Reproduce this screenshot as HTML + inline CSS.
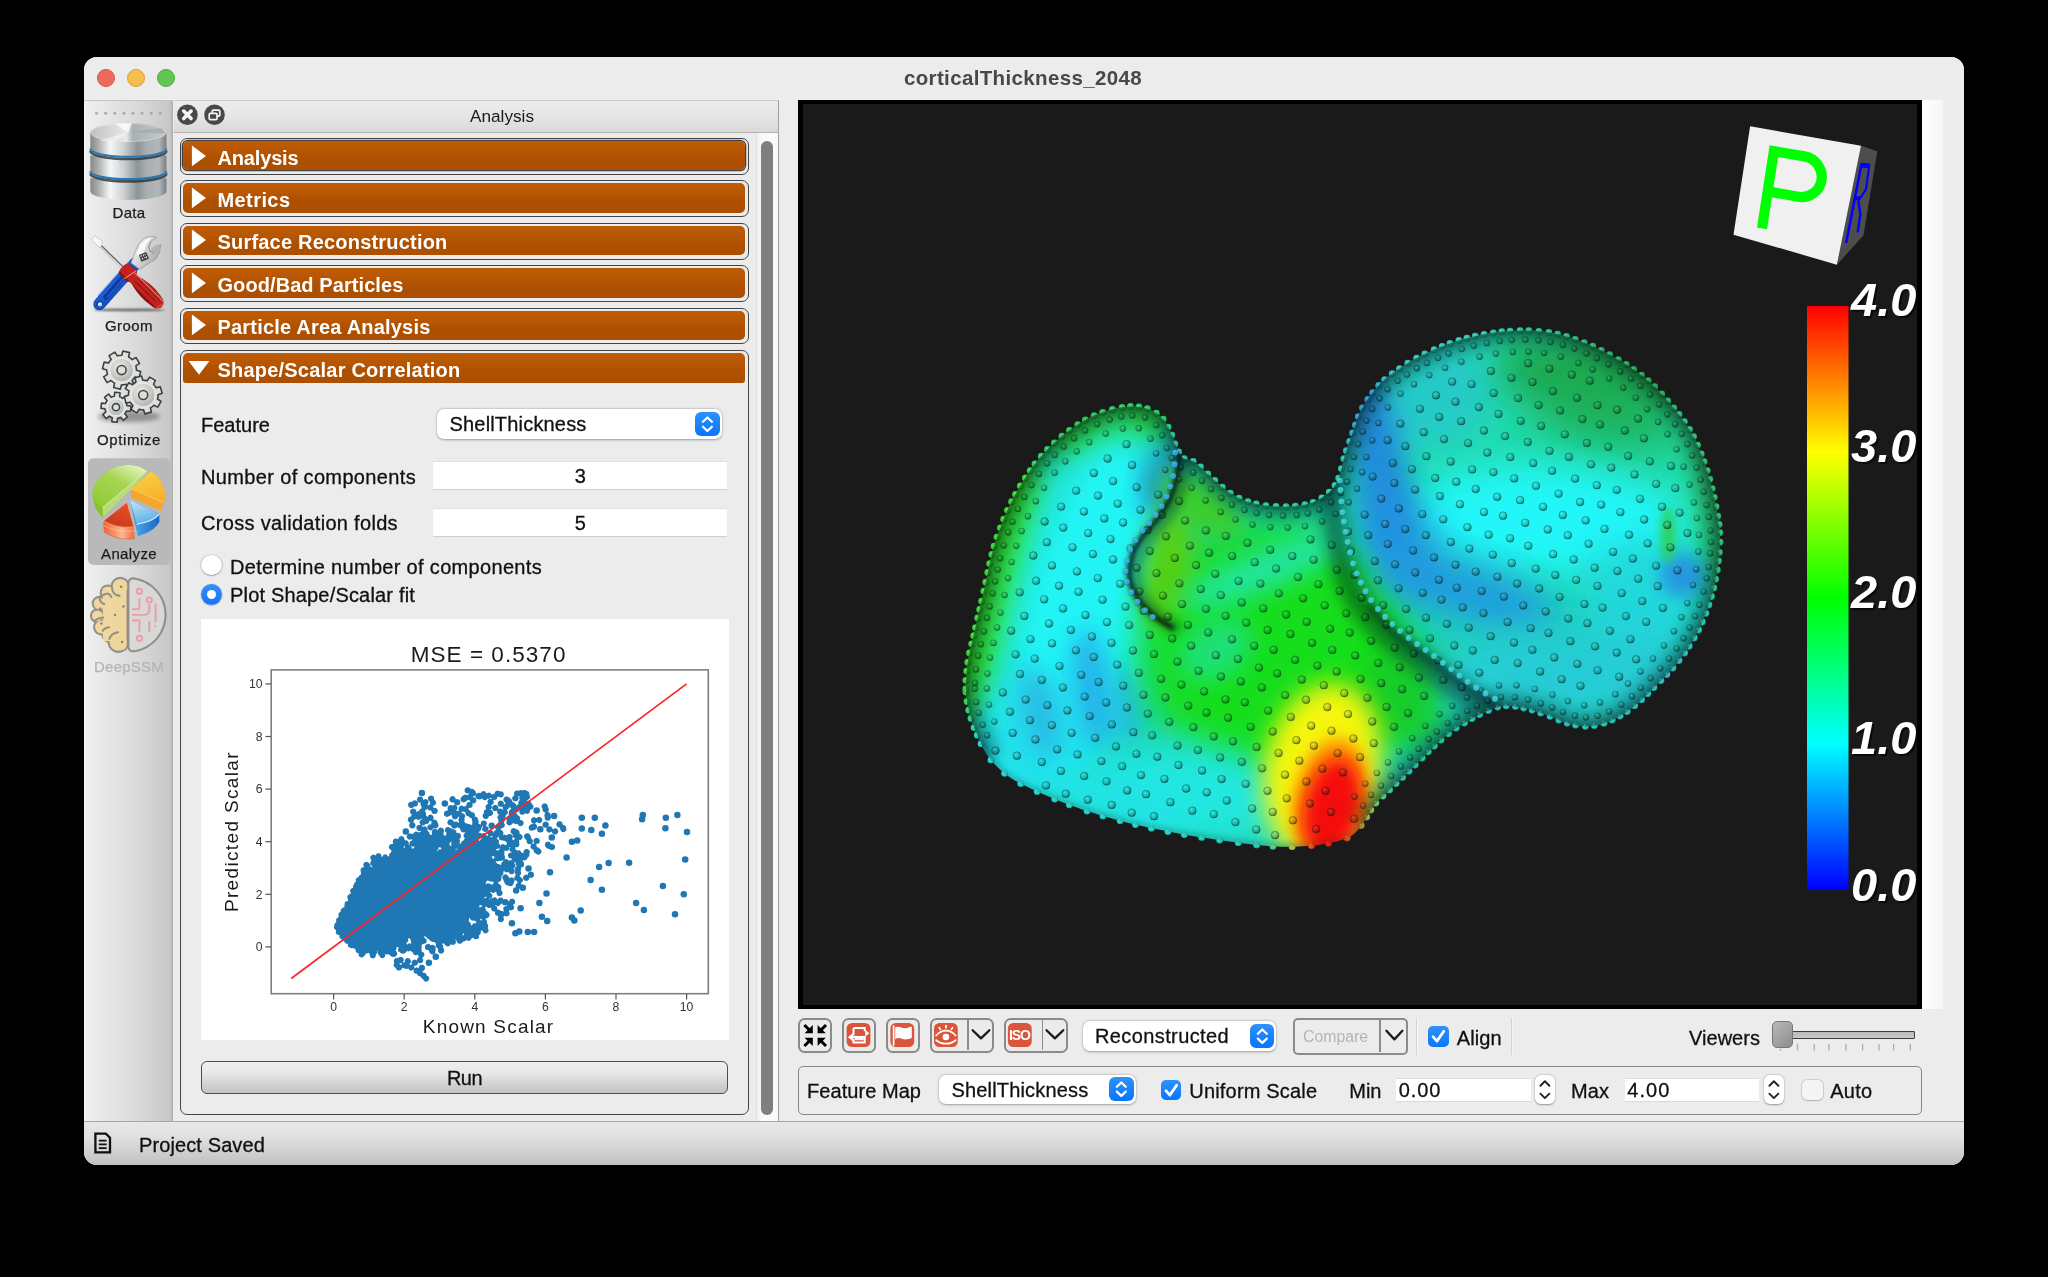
<!DOCTYPE html>
<html>
<head>
<meta charset="utf-8">
<title>corticalThickness_2048</title>
<style>
html,body{margin:0;padding:0;background:#000;}
body{will-change:transform;width:2048px;height:1277px;position:relative;overflow:hidden;font-family:"Liberation Sans",sans-serif;color:#111;}
.abs{position:absolute;}
#win{position:absolute;left:84px;top:57px;width:1880px;height:1108px;background:#ececec;border-radius:13px;overflow:hidden;}
#titlebar{position:absolute;left:0;top:0;width:1880px;height:43px;background:#ececec;border-bottom:1px solid #f0f0f0;box-sizing:border-box;}
.tl{position:absolute;top:12px;width:18px;height:18px;border-radius:50%;box-sizing:border-box;}
#title{position:absolute;left:0;top:0;width:1878px;height:43px;line-height:41px;text-align:center;font-weight:bold;font-size:20.5px;letter-spacing:0.36px;color:#484848;}
#ltool{position:absolute;left:0;top:43px;width:89px;height:1022px;border-top:1px solid #c2c2c2;box-sizing:border-box;background:linear-gradient(90deg,#f7f7f7 0px,#f3f3f3 1.6px,#eeeeee 3.5px,#e7e7e7 22px,#d5d5d5 62px,#c7c7c7 86px,#b0b0b0 88.5px,#dcdcdc 89px);}
.tlabel{position:absolute;left:0;width:89px;text-align:center;font-size:15.5px;color:#1c1c1c;letter-spacing:0.4px;}
#status{position:absolute;left:0;top:1064px;width:1880px;height:44px;background:linear-gradient(180deg,#e8e8e8 0%,#e0e0e0 35%,#cdcdcd 75%,#c0c0c0 100%);border-top:1.4px solid #a6a6a6;box-sizing:border-box;}
#dockhead{position:absolute;left:90px;top:43px;width:604px;height:33px;background:linear-gradient(180deg,#ebebeb,#dedede);border-bottom:1px solid #c4c4c4;box-sizing:border-box;}
.gb{position:absolute;left:96px;width:570px;height:37px;border:1.5px solid #3a3a3a;border-radius:7px;box-sizing:border-box;background:#ececec;}
.gbh{position:absolute;left:2.5px;top:2.5px;right:2.5px;height:29px;border-radius:5px;background:linear-gradient(180deg,#c05c06 0%,#b65503 45%,#ab4f00 100%);box-shadow:0 0 0 1px #7d3a00 inset;}
.gbt{position:absolute;left:34px;top:0;height:29px;line-height:30px;color:#fff;font-weight:bold;font-size:20px;white-space:nowrap;}
.lbl{position:absolute;font-size:20px;-webkit-text-stroke:0.3px #111;color:#111;white-space:nowrap;line-height:24px;}
.ledit{position:absolute;background:#fff;border-top:1px solid #e2e2e2;border-bottom:1px solid #cfcfcf;box-sizing:border-box;text-align:center;font-size:20px;-webkit-text-stroke:0.3px #111;}
.combo{position:absolute;background:#fff;border-radius:7px;box-shadow:0 0.5px 2.5px rgba(0,0,0,0.32),0 0 0 0.5px rgba(0,0,0,0.06);font-size:20px;-webkit-text-stroke:0.3px #111;}
.combo .ct{position:absolute;left:13px;top:0;white-space:nowrap;}
.cbtn{position:absolute;width:24px;height:25px;border-radius:6px;background:linear-gradient(180deg,#2e92fd,#0775fb);}
.chk{position:absolute;width:20px;height:20px;border-radius:5px;background:linear-gradient(180deg,#2e92fd,#0a76fb);}
.tbtn{position:absolute;height:40px;border:3px solid #8e8e8e;border-radius:8px;box-sizing:border-box;background:#e6e6e6;}

.gb2{position:absolute;left:180.3px;width:568.7px;height:36.8px;border:1.7px solid #444;border-radius:7px;box-sizing:border-box;background:#ececec;}
.gbh2{position:absolute;left:1.7px;top:2px;width:562.2px;height:29.6px;border-radius:5px;background:linear-gradient(180deg,#bf5c05 0%,#b75603 35%,#ad5000 60%,#ac4f00 100%);}
.gbh2.first{box-shadow:0 0 0 1.3px #444;left:2.2px;width:561.2px;top:2.4px;height:28.8px;}
.tri{position:absolute;left:5.4px;top:4.6px;width:24px;height:24px;}
.gbt2{position:absolute;left:36.2px;top:3.5px;height:29.6px;line-height:30.6px;color:#fff;font-weight:bold;font-size:20px;white-space:nowrap;}

.tb2{position:absolute;top:1018.3px;height:34.9px;border:2.7px solid #8b8b8b;border-radius:6.5px;box-sizing:border-box;background:#ebebeb;}
.tbdiv{position:absolute;top:0;width:1.6px;height:29.5px;background:#8b8b8b;}
.spin{position:absolute;top:1077.6px;height:24.6px;background:#fff;border-top:1px solid #dcdcdc;border-bottom:1px solid #d8d8d8;box-sizing:border-box;font-size:20px;line-height:23px;padding-left:2.6px;-webkit-text-stroke:0.3px #111;}
.stp{position:absolute;top:1074.7px;width:19.8px;height:29.4px;border-radius:6px;background:#fff;box-shadow:0 0.5px 2px rgba(0,0,0,0.35),0 0 0 0.5px rgba(0,0,0,0.06);}
</style>
</head>
<body>
<div id="win">
  <div id="titlebar">
    <div class="tl" style="left:13px;background:#ed6a5e;border:1px solid #d5554a;"></div>
    <div class="tl" style="left:43px;background:#f5bf4f;border:1px solid #d9a23b;"></div>
    <div class="tl" style="left:73px;background:#62c554;border:1px solid #4fa840;"></div>
    <div id="title">corticalThickness_2048</div>
  </div>
  <div id="ltool"></div>
  <div id="dockhead"></div>
  <div id="status"></div>
</div>
<!-- page-coordinate layers -->
<div id="viewer" class="abs" style="left:798px;top:100px;width:1124px;height:908.8px;background:#1a1a1a;border:4px solid #000;border-left-width:5px;border-right-width:5px;box-sizing:border-box;"></div>
<div class="abs" style="left:1922px;top:100px;width:21px;height:908.8px;background:linear-gradient(90deg,#fff,#f6f6f6);"></div>
<svg class="abs" style="left:801px;top:103px" width="1118" height="902" viewBox="801 103 1118 902">
<defs>
<filter id="b2" x="-50%" y="-50%" width="200%" height="200%"><feGaussianBlur stdDeviation="2"/></filter>
<filter id="b3" x="-50%" y="-50%" width="200%" height="200%"><feGaussianBlur stdDeviation="3"/></filter>
<filter id="b5" x="-50%" y="-50%" width="200%" height="200%"><feGaussianBlur stdDeviation="5"/></filter>
<filter id="b8" x="-50%" y="-50%" width="200%" height="200%"><feGaussianBlur stdDeviation="8"/></filter>
<filter id="b12" x="-50%" y="-50%" width="200%" height="200%"><feGaussianBlur stdDeviation="12"/></filter>
<filter id="b18" x="-50%" y="-50%" width="200%" height="200%"><feGaussianBlur stdDeviation="18"/></filter>
<filter id="b26" x="-50%" y="-50%" width="200%" height="200%"><feGaussianBlur stdDeviation="26"/></filter>
<linearGradient id="cbar" x1="0" y1="0" x2="0" y2="1"><stop offset="0" stop-color="#ff0000"/><stop offset="0.25" stop-color="#ffff00"/><stop offset="0.5" stop-color="#00ff00"/><stop offset="0.75" stop-color="#00ffff"/><stop offset="1" stop-color="#0000ff"/></linearGradient>
<radialGradient id="dotg" cx="0.4" cy="0.35" r="0.7"><stop offset="0" stop-color="#fff" stop-opacity="0.3"/><stop offset="0.28" stop-color="#003020" stop-opacity="0.1"/><stop offset="0.65" stop-color="#002018" stop-opacity="0.3"/><stop offset="1" stop-color="#001008" stop-opacity="0.62"/></radialGradient>
<g id="dt"><circle r="3.9" fill="url(#dotg)" stroke="#001a10" stroke-opacity="0.3" stroke-width="0.9"/></g>
<radialGradient id="dotg2" cx="0.4" cy="0.35" r="0.75"><stop offset="0" stop-color="#fff" stop-opacity="0.3"/><stop offset="0.6" stop-color="#000" stop-opacity="0.0"/><stop offset="1" stop-color="#000" stop-opacity="0.45"/></radialGradient>
<g id="de"><circle r="3.4" fill="url(#dotg2)"/></g>
<g id="ds"><circle r="3.1" fill="url(#dotg)" stroke="#001a10" stroke-opacity="0.26" stroke-width="0.8"/></g>
<clipPath id="sc"><path d="M965.8,689.0C965.6,680.4 966.5,670.8 968.0,661.0C969.5,651.2 972.2,642.5 975.0,630.0C977.8,617.5 982.0,599.3 985.0,586.0C988.0,572.7 989.7,561.5 993.0,550.0C996.3,538.5 1000.4,527.0 1004.6,517.0C1008.8,507.0 1012.4,499.5 1018.0,490.0C1023.6,480.5 1030.8,468.8 1038.0,460.0C1045.2,451.2 1052.8,443.8 1061.0,437.0C1069.2,430.2 1078.5,423.6 1087.0,419.0C1095.5,414.4 1104.5,411.6 1112.0,409.5C1119.5,407.4 1125.8,406.5 1132.0,406.5C1138.2,406.5 1144.3,407.4 1149.5,409.5C1154.7,411.6 1159.4,415.1 1163.0,419.0C1166.6,422.9 1168.8,428.4 1171.0,433.0C1173.2,437.6 1174.0,442.4 1176.0,446.6C1178.0,450.8 1179.9,455.4 1183.0,458.0C1186.1,460.6 1190.0,459.0 1194.5,462.0C1199.0,465.0 1204.4,471.1 1210.0,476.0C1215.6,480.9 1221.8,487.4 1228.0,491.6C1234.2,495.8 1239.5,498.9 1247.0,501.4C1254.5,503.8 1263.8,505.6 1273.0,506.3C1282.2,507.0 1293.9,506.7 1302.0,505.3C1310.1,503.9 1315.7,501.7 1321.5,498.0C1327.3,494.3 1332.7,490.2 1336.6,483.0C1340.5,475.8 1342.1,464.0 1345.0,455.0C1347.9,446.0 1351.1,436.9 1354.0,429.0C1356.9,421.1 1358.2,415.2 1362.5,407.7C1366.8,400.2 1373.9,390.4 1380.0,384.0C1386.1,377.6 1392.2,373.7 1399.0,369.0C1405.8,364.3 1411.9,360.3 1420.6,356.0C1429.3,351.7 1440.6,346.6 1451.0,343.0C1461.4,339.4 1472.3,336.5 1483.0,334.5C1493.7,332.5 1504.2,331.2 1515.0,330.8C1525.8,330.4 1537.2,330.6 1548.0,332.3C1558.8,334.0 1569.3,337.1 1580.0,341.0C1590.7,344.9 1601.2,349.9 1612.0,356.0C1622.8,362.1 1634.9,369.6 1644.6,377.5C1654.3,385.4 1662.1,394.1 1670.0,403.4C1677.9,412.7 1685.8,422.4 1692.0,433.5C1698.2,444.6 1703.0,458.1 1707.0,470.0C1711.0,481.9 1713.5,493.4 1715.7,504.6C1717.9,515.8 1719.8,525.8 1720.0,537.0C1720.2,548.2 1718.8,560.7 1717.0,572.0C1715.2,583.3 1712.5,594.1 1709.0,604.6C1705.5,615.1 1701.3,625.3 1696.0,635.0C1690.7,644.7 1683.8,654.4 1677.0,663.0C1670.2,671.6 1662.5,679.0 1655.0,686.5C1647.5,694.0 1639.5,702.2 1632.0,708.0C1624.5,713.8 1617.2,718.0 1610.0,721.0C1602.8,724.0 1595.8,726.0 1588.6,726.3C1581.4,726.6 1574.2,725.0 1567.0,723.0C1559.8,721.0 1552.7,717.0 1545.5,714.5C1538.3,712.0 1530.8,709.5 1524.0,708.0C1517.2,706.5 1510.8,705.3 1504.6,705.8C1498.4,706.3 1493.1,708.5 1487.0,711.0C1480.9,713.5 1474.0,717.5 1468.0,721.0C1462.0,724.5 1456.8,727.4 1451.0,731.7C1445.2,736.0 1438.9,741.8 1433.5,746.8C1428.1,751.8 1423.6,756.8 1418.5,761.8C1413.4,766.8 1408.0,772.1 1403.0,777.0C1398.0,781.9 1393.2,786.4 1388.5,791.0C1383.8,795.6 1379.0,799.1 1374.7,804.4C1370.5,809.7 1367.0,817.7 1363.0,823.0C1359.0,828.3 1356.5,832.7 1351.0,836.0C1345.5,839.3 1337.4,841.3 1330.0,843.0C1322.6,844.7 1314.7,845.4 1306.5,846.0C1298.3,846.6 1289.7,847.0 1280.7,846.7C1271.7,846.4 1263.1,845.6 1252.5,844.4C1241.9,843.2 1229.1,841.5 1217.0,839.7C1204.9,837.9 1192.6,836.1 1179.7,833.8C1166.8,831.4 1153.0,828.7 1139.7,825.6C1126.4,822.5 1112.3,818.8 1099.8,815.0C1087.3,811.2 1075.5,807.2 1064.5,803.0C1053.5,798.8 1043.4,794.5 1034.0,790.0C1024.6,785.5 1015.5,781.4 1008.0,776.0C1000.5,770.6 994.1,764.1 989.0,757.4C983.9,750.7 980.9,743.4 977.6,736.0C974.3,728.6 971.4,720.6 969.4,712.8C967.4,705.0 966.0,697.6 965.8,689.0Z"/></clipPath>
<mask id="sm" maskUnits="userSpaceOnUse" x="801" y="103" width="1118" height="902"><path d="M965.8,689.0C965.6,680.4 966.5,670.8 968.0,661.0C969.5,651.2 972.2,642.5 975.0,630.0C977.8,617.5 982.0,599.3 985.0,586.0C988.0,572.7 989.7,561.5 993.0,550.0C996.3,538.5 1000.4,527.0 1004.6,517.0C1008.8,507.0 1012.4,499.5 1018.0,490.0C1023.6,480.5 1030.8,468.8 1038.0,460.0C1045.2,451.2 1052.8,443.8 1061.0,437.0C1069.2,430.2 1078.5,423.6 1087.0,419.0C1095.5,414.4 1104.5,411.6 1112.0,409.5C1119.5,407.4 1125.8,406.5 1132.0,406.5C1138.2,406.5 1144.3,407.4 1149.5,409.5C1154.7,411.6 1159.4,415.1 1163.0,419.0C1166.6,422.9 1168.8,428.4 1171.0,433.0C1173.2,437.6 1174.0,442.4 1176.0,446.6C1178.0,450.8 1179.9,455.4 1183.0,458.0C1186.1,460.6 1190.0,459.0 1194.5,462.0C1199.0,465.0 1204.4,471.1 1210.0,476.0C1215.6,480.9 1221.8,487.4 1228.0,491.6C1234.2,495.8 1239.5,498.9 1247.0,501.4C1254.5,503.8 1263.8,505.6 1273.0,506.3C1282.2,507.0 1293.9,506.7 1302.0,505.3C1310.1,503.9 1315.7,501.7 1321.5,498.0C1327.3,494.3 1332.7,490.2 1336.6,483.0C1340.5,475.8 1342.1,464.0 1345.0,455.0C1347.9,446.0 1351.1,436.9 1354.0,429.0C1356.9,421.1 1358.2,415.2 1362.5,407.7C1366.8,400.2 1373.9,390.4 1380.0,384.0C1386.1,377.6 1392.2,373.7 1399.0,369.0C1405.8,364.3 1411.9,360.3 1420.6,356.0C1429.3,351.7 1440.6,346.6 1451.0,343.0C1461.4,339.4 1472.3,336.5 1483.0,334.5C1493.7,332.5 1504.2,331.2 1515.0,330.8C1525.8,330.4 1537.2,330.6 1548.0,332.3C1558.8,334.0 1569.3,337.1 1580.0,341.0C1590.7,344.9 1601.2,349.9 1612.0,356.0C1622.8,362.1 1634.9,369.6 1644.6,377.5C1654.3,385.4 1662.1,394.1 1670.0,403.4C1677.9,412.7 1685.8,422.4 1692.0,433.5C1698.2,444.6 1703.0,458.1 1707.0,470.0C1711.0,481.9 1713.5,493.4 1715.7,504.6C1717.9,515.8 1719.8,525.8 1720.0,537.0C1720.2,548.2 1718.8,560.7 1717.0,572.0C1715.2,583.3 1712.5,594.1 1709.0,604.6C1705.5,615.1 1701.3,625.3 1696.0,635.0C1690.7,644.7 1683.8,654.4 1677.0,663.0C1670.2,671.6 1662.5,679.0 1655.0,686.5C1647.5,694.0 1639.5,702.2 1632.0,708.0C1624.5,713.8 1617.2,718.0 1610.0,721.0C1602.8,724.0 1595.8,726.0 1588.6,726.3C1581.4,726.6 1574.2,725.0 1567.0,723.0C1559.8,721.0 1552.7,717.0 1545.5,714.5C1538.3,712.0 1530.8,709.5 1524.0,708.0C1517.2,706.5 1510.8,705.3 1504.6,705.8C1498.4,706.3 1493.1,708.5 1487.0,711.0C1480.9,713.5 1474.0,717.5 1468.0,721.0C1462.0,724.5 1456.8,727.4 1451.0,731.7C1445.2,736.0 1438.9,741.8 1433.5,746.8C1428.1,751.8 1423.6,756.8 1418.5,761.8C1413.4,766.8 1408.0,772.1 1403.0,777.0C1398.0,781.9 1393.2,786.4 1388.5,791.0C1383.8,795.6 1379.0,799.1 1374.7,804.4C1370.5,809.7 1367.0,817.7 1363.0,823.0C1359.0,828.3 1356.5,832.7 1351.0,836.0C1345.5,839.3 1337.4,841.3 1330.0,843.0C1322.6,844.7 1314.7,845.4 1306.5,846.0C1298.3,846.6 1289.7,847.0 1280.7,846.7C1271.7,846.4 1263.1,845.6 1252.5,844.4C1241.9,843.2 1229.1,841.5 1217.0,839.7C1204.9,837.9 1192.6,836.1 1179.7,833.8C1166.8,831.4 1153.0,828.7 1139.7,825.6C1126.4,822.5 1112.3,818.8 1099.8,815.0C1087.3,811.2 1075.5,807.2 1064.5,803.0C1053.5,798.8 1043.4,794.5 1034.0,790.0C1024.6,785.5 1015.5,781.4 1008.0,776.0C1000.5,770.6 994.1,764.1 989.0,757.4C983.9,750.7 980.9,743.4 977.6,736.0C974.3,728.6 971.4,720.6 969.4,712.8C967.4,705.0 966.0,697.6 965.8,689.0Z" fill="#fff"/>
<g fill="#fff"><circle cx="965.8" cy="689.0" r="3.4"/><circle cx="965.9" cy="680.3" r="3.4"/><circle cx="966.7" cy="671.1" r="3.4"/><circle cx="967.8" cy="662.2" r="3.4"/><circle cx="969.5" cy="653.0" r="3.4"/><circle cx="971.7" cy="643.8" r="3.4"/><circle cx="973.7" cy="635.7" r="3.4"/><circle cx="975.5" cy="627.6" r="3.4"/><circle cx="977.7" cy="618.0" r="3.4"/><circle cx="979.7" cy="609.5" r="3.4"/><circle cx="981.6" cy="601.1" r="3.4"/><circle cx="983.8" cy="591.1" r="3.4"/><circle cx="985.8" cy="582.2" r="3.4"/><circle cx="987.8" cy="572.5" r="3.4"/><circle cx="989.7" cy="563.6" r="3.4"/><circle cx="991.9" cy="554.4" r="3.4"/><circle cx="994.1" cy="546.2" r="3.4"/><circle cx="997.0" cy="537.1" r="3.4"/><circle cx="1000.4" cy="527.8" r="3.4"/><circle cx="1003.7" cy="519.2" r="3.4"/><circle cx="1007.5" cy="510.3" r="3.4"/><circle cx="1011.6" cy="501.7" r="3.4"/><circle cx="1015.5" cy="494.3" r="3.4"/><circle cx="1020.4" cy="485.9" r="3.4"/><circle cx="1025.4" cy="477.9" r="3.4"/><circle cx="1030.2" cy="470.6" r="3.4"/><circle cx="1035.0" cy="463.9" r="3.4"/><circle cx="1041.3" cy="456.2" r="3.4"/><circle cx="1047.5" cy="449.4" r="3.4"/><circle cx="1054.4" cy="442.8" r="3.4"/><circle cx="1061.9" cy="436.2" r="3.4"/><circle cx="1069.5" cy="430.3" r="3.4"/><circle cx="1077.8" cy="424.6" r="3.4"/><circle cx="1085.4" cy="419.9" r="3.4"/><circle cx="1094.2" cy="415.6" r="3.4"/><circle cx="1102.7" cy="412.3" r="3.4"/><circle cx="1112.4" cy="409.4" r="3.4"/><circle cx="1122.1" cy="407.3" r="3.4"/><circle cx="1130.4" cy="406.5" r="3.4"/><circle cx="1138.9" cy="406.9" r="3.4"/><circle cx="1147.3" cy="408.7" r="3.4"/><circle cx="1156.3" cy="413.2" r="3.4"/><circle cx="1163.2" cy="419.2" r="3.4"/><circle cx="1168.2" cy="427.1" r="3.4"/><circle cx="1171.9" cy="435.1" r="3.4"/><circle cx="1174.9" cy="443.9" r="3.4"/><circle cx="1178.6" cy="452.0" r="3.4"/><circle cx="1184.2" cy="458.7" r="3.4"/><circle cx="1193.2" cy="461.3" r="3.4"/><circle cx="1200.5" cy="467.0" r="3.4"/><circle cx="1207.8" cy="474.0" r="3.4"/><circle cx="1214.8" cy="480.4" r="3.4"/><circle cx="1222.3" cy="487.1" r="3.4"/><circle cx="1230.2" cy="493.1" r="3.4"/><circle cx="1239.0" cy="498.2" r="3.4"/><circle cx="1247.9" cy="501.7" r="3.4"/><circle cx="1256.2" cy="503.9" r="3.4"/><circle cx="1265.9" cy="505.6" r="3.4"/><circle cx="1276.0" cy="506.4" r="3.4"/><circle cx="1286.0" cy="506.6" r="3.4"/><circle cx="1295.3" cy="506.1" r="3.4"/><circle cx="1304.9" cy="504.7" r="3.4"/><circle cx="1313.1" cy="502.3" r="3.4"/><circle cx="1321.9" cy="497.8" r="3.4"/><circle cx="1329.3" cy="492.1" r="3.4"/><circle cx="1335.0" cy="485.5" r="3.4"/><circle cx="1338.7" cy="478.1" r="3.4"/><circle cx="1341.4" cy="468.6" r="3.4"/><circle cx="1343.9" cy="458.7" r="3.4"/><circle cx="1346.4" cy="450.7" r="3.4"/><circle cx="1349.6" cy="441.4" r="3.4"/><circle cx="1352.6" cy="432.9" r="3.4"/><circle cx="1355.4" cy="424.9" r="3.4"/><circle cx="1358.3" cy="416.6" r="3.4"/><circle cx="1362.4" cy="407.8" r="3.4"/><circle cx="1367.8" cy="399.4" r="3.4"/><circle cx="1372.7" cy="392.7" r="3.4"/><circle cx="1378.7" cy="385.5" r="3.4"/><circle cx="1384.6" cy="379.6" r="3.4"/><circle cx="1392.2" cy="373.7" r="3.4"/><circle cx="1399.5" cy="368.7" r="3.4"/><circle cx="1407.8" cy="363.2" r="3.4"/><circle cx="1416.6" cy="358.1" r="3.4"/><circle cx="1424.8" cy="354.0" r="3.4"/><circle cx="1434.1" cy="349.7" r="3.4"/><circle cx="1442.2" cy="346.3" r="3.4"/><circle cx="1450.0" cy="343.4" r="3.4"/><circle cx="1458.9" cy="340.4" r="3.4"/><circle cx="1466.9" cy="338.2" r="3.4"/><circle cx="1475.2" cy="336.1" r="3.4"/><circle cx="1484.1" cy="334.3" r="3.4"/><circle cx="1493.4" cy="332.8" r="3.4"/><circle cx="1501.8" cy="331.7" r="3.4"/><circle cx="1510.1" cy="331.1" r="3.4"/><circle cx="1520.0" cy="330.7" r="3.4"/><circle cx="1528.8" cy="330.7" r="3.4"/><circle cx="1538.9" cy="331.3" r="3.4"/><circle cx="1548.8" cy="332.5" r="3.4"/><circle cx="1557.6" cy="334.2" r="3.4"/><circle cx="1566.4" cy="336.5" r="3.4"/><circle cx="1575.2" cy="339.3" r="3.4"/><circle cx="1584.1" cy="342.6" r="3.4"/><circle cx="1592.8" cy="346.2" r="3.4"/><circle cx="1601.2" cy="350.3" r="3.4"/><circle cx="1609.6" cy="354.7" r="3.4"/><circle cx="1618.3" cy="359.7" r="3.4"/><circle cx="1626.2" cy="364.5" r="3.4"/><circle cx="1633.7" cy="369.5" r="3.4"/><circle cx="1641.5" cy="375.1" r="3.4"/><circle cx="1648.2" cy="380.6" r="3.4"/><circle cx="1654.7" cy="386.6" r="3.4"/><circle cx="1661.7" cy="393.9" r="3.4"/><circle cx="1667.8" cy="400.9" r="3.4"/><circle cx="1673.8" cy="408.0" r="3.4"/><circle cx="1679.0" cy="414.4" r="3.4"/><circle cx="1684.4" cy="421.6" r="3.4"/><circle cx="1689.5" cy="429.4" r="3.4"/><circle cx="1693.6" cy="436.6" r="3.4"/><circle cx="1697.6" cy="445.1" r="3.4"/><circle cx="1701.2" cy="453.9" r="3.4"/><circle cx="1704.1" cy="461.7" r="3.4"/><circle cx="1707.2" cy="470.6" r="3.4"/><circle cx="1709.8" cy="479.3" r="3.4"/><circle cx="1712.2" cy="488.6" r="3.4"/><circle cx="1714.2" cy="497.3" r="3.4"/><circle cx="1716.1" cy="506.7" r="3.4"/><circle cx="1717.8" cy="516.2" r="3.4"/><circle cx="1719.1" cy="524.4" r="3.4"/><circle cx="1719.8" cy="532.7" r="3.4"/><circle cx="1720.0" cy="542.2" r="3.4"/><circle cx="1719.4" cy="552.3" r="3.4"/><circle cx="1718.5" cy="561.0" r="3.4"/><circle cx="1717.3" cy="570.0" r="3.4"/><circle cx="1715.7" cy="579.2" r="3.4"/><circle cx="1713.8" cy="587.9" r="3.4"/><circle cx="1711.5" cy="596.5" r="3.4"/><circle cx="1708.9" cy="604.9" r="3.4"/><circle cx="1705.9" cy="613.3" r="3.4"/><circle cx="1702.3" cy="622.0" r="3.4"/><circle cx="1698.6" cy="630.0" r="3.4"/><circle cx="1694.3" cy="637.9" r="3.4"/><circle cx="1689.2" cy="646.2" r="3.4"/><circle cx="1684.6" cy="653.0" r="3.4"/><circle cx="1679.0" cy="660.5" r="3.4"/><circle cx="1672.9" cy="668.0" r="3.4"/><circle cx="1666.9" cy="674.5" r="3.4"/><circle cx="1660.9" cy="680.6" r="3.4"/><circle cx="1653.9" cy="687.6" r="3.4"/><circle cx="1647.8" cy="693.7" r="3.4"/><circle cx="1641.6" cy="699.7" r="3.4"/><circle cx="1634.8" cy="705.7" r="3.4"/><circle cx="1627.2" cy="711.5" r="3.4"/><circle cx="1620.1" cy="716.0" r="3.4"/><circle cx="1612.2" cy="720.0" r="3.4"/><circle cx="1604.0" cy="723.2" r="3.4"/><circle cx="1594.4" cy="725.6" r="3.4"/><circle cx="1585.4" cy="726.3" r="3.4"/><circle cx="1575.6" cy="725.1" r="3.4"/><circle cx="1567.3" cy="723.1" r="3.4"/><circle cx="1558.9" cy="720.1" r="3.4"/><circle cx="1550.2" cy="716.3" r="3.4"/><circle cx="1540.8" cy="712.9" r="3.4"/><circle cx="1532.2" cy="710.1" r="3.4"/><circle cx="1523.8" cy="708.0" r="3.4"/><circle cx="1515.5" cy="706.4" r="3.4"/><circle cx="1506.3" cy="705.8" r="3.4"/><circle cx="1497.8" cy="707.0" r="3.4"/><circle cx="1488.6" cy="710.4" r="3.4"/><circle cx="1479.6" cy="714.5" r="3.4"/><circle cx="1472.1" cy="718.6" r="3.4"/><circle cx="1464.5" cy="723.0" r="3.4"/><circle cx="1456.2" cy="728.1" r="3.4"/><circle cx="1448.5" cy="733.7" r="3.4"/><circle cx="1441.0" cy="740.0" r="3.4"/><circle cx="1434.4" cy="746.0" r="3.4"/><circle cx="1428.3" cy="751.8" r="3.4"/><circle cx="1422.2" cy="758.1" r="3.4"/><circle cx="1415.2" cy="765.0" r="3.4"/><circle cx="1409.0" cy="771.2" r="3.4"/><circle cx="1402.6" cy="777.4" r="3.4"/><circle cx="1396.1" cy="783.6" r="3.4"/><circle cx="1389.6" cy="789.9" r="3.4"/><circle cx="1383.0" cy="796.0" r="3.4"/><circle cx="1375.9" cy="803.1" r="3.4"/><circle cx="1370.9" cy="810.0" r="3.4"/><circle cx="1366.8" cy="817.1" r="3.4"/><circle cx="1361.2" cy="825.5" r="3.4"/><circle cx="1347.2" cy="837.9" r="3.4"/><circle cx="1328.5" cy="843.3" r="3.4"/><circle cx="1311.5" cy="845.6" r="3.4"/><circle cx="1292.2" cy="846.7" r="3.4"/><circle cx="1273.0" cy="846.3" r="3.4"/><circle cx="1256.7" cy="844.9" r="3.4"/><circle cx="1238.3" cy="842.7" r="3.4"/><circle cx="1219.7" cy="840.1" r="3.4"/><circle cx="1201.7" cy="837.4" r="3.4"/><circle cx="1184.4" cy="834.6" r="3.4"/><circle cx="1168.0" cy="831.6" r="3.4"/><circle cx="1151.5" cy="828.2" r="3.4"/><circle cx="1135.5" cy="824.6" r="3.4"/><circle cx="1120.2" cy="820.7" r="3.4"/><circle cx="1103.0" cy="815.9" r="3.4"/><circle cx="1087.1" cy="811.0" r="3.4"/><circle cx="1069.4" cy="804.8" r="3.4"/><circle cx="1054.8" cy="799.1" r="3.4"/><circle cx="1037.2" cy="791.5" r="3.4"/><circle cx="1020.8" cy="783.6" r="3.4"/><circle cx="1004.6" cy="773.3" r="3.4"/><circle cx="991.0" cy="759.9" r="3.4"/><circle cx="981.1" cy="743.7" r="3.4"/><circle cx="977.3" cy="735.2" r="3.4"/><circle cx="974.1" cy="727.6" r="3.4"/><circle cx="971.0" cy="718.4" r="3.4"/><circle cx="968.8" cy="710.2" r="3.4"/><circle cx="967.0" cy="701.5" r="3.4"/><circle cx="966.0" cy="692.1" r="3.4"/></g></mask>
</defs>
<g mask="url(#sm)">
<rect x="940" y="300" width="820" height="580" fill="#1fd4b4"/>
<ellipse cx="990" cy="585" rx="32" ry="165" transform="rotate(14 990 585)" fill="#2fe02f" opacity="1" filter="url(#b12)"/>
<ellipse cx="1105" cy="428" rx="70" ry="30" transform="rotate(-8 1105 428)" fill="#25cc38" opacity="1" filter="url(#b12)"/>
<ellipse cx="1085" cy="610" rx="70" ry="185" transform="rotate(14 1085 610)" fill="#20f4f6" opacity="1" filter="url(#b18)"/>
<ellipse cx="1030" cy="745" rx="60" ry="60" transform="rotate(0 1030 745)" fill="#22e2ee" opacity="0.9" filter="url(#b18)"/>
<ellipse cx="1160" cy="482" rx="18" ry="34" transform="rotate(10 1160 482)" fill="#1f8ed8" opacity="0.95" filter="url(#b12)"/>
<ellipse cx="1093" cy="690" rx="20" ry="62" transform="rotate(-8 1093 690)" fill="#28a8e6" opacity="0.85" filter="url(#b12)"/>
<ellipse cx="1040" cy="712" rx="18" ry="48" transform="rotate(-12 1040 712)" fill="#2ab0e2" opacity="0.8" filter="url(#b12)"/>
<ellipse cx="1128" cy="705" rx="14" ry="40" transform="rotate(-5 1128 705)" fill="#28b0e6" opacity="0.6" filter="url(#b8)"/>
<ellipse cx="1275" cy="650" rx="135" ry="125" transform="rotate(0 1275 650)" fill="#14de1e" opacity="1" filter="url(#b18)"/>
<ellipse cx="1168" cy="565" rx="26" ry="62" transform="rotate(10 1168 565)" fill="#58cf0c" opacity="0.95" filter="url(#b12)"/>
<ellipse cx="1200" cy="505" rx="50" ry="22" transform="rotate(35 1200 505)" fill="#40cc18" opacity="0.9" filter="url(#b12)"/>
<ellipse cx="1265" cy="570" rx="92" ry="20" transform="rotate(-22 1265 570)" fill="#25e6b6" opacity="0.85" filter="url(#b12)"/>
<ellipse cx="1215" cy="650" rx="40" ry="28" transform="rotate(-30 1215 650)" fill="#22e0a0" opacity="0.7" filter="url(#b12)"/>
<ellipse cx="1195" cy="792" rx="95" ry="45" transform="rotate(10 1195 792)" fill="#20e8e0" opacity="1" filter="url(#b18)"/>
<ellipse cx="1120" cy="800" rx="70" ry="30" transform="rotate(15 1120 800)" fill="#22e4e6" opacity="0.9" filter="url(#b12)"/>
<ellipse cx="1400" cy="700" rx="45" ry="50" transform="rotate(0 1400 700)" fill="#14cc20" opacity="0.9" filter="url(#b12)"/>
<ellipse cx="1322" cy="770" rx="58" ry="88" transform="rotate(12 1322 770)" fill="#f6f60c" opacity="1" filter="url(#b12)"/>
<ellipse cx="1330" cy="800" rx="36" ry="62" transform="rotate(12 1330 800)" fill="#ff8a00" opacity="1" filter="url(#b8)"/>
<ellipse cx="1332" cy="808" rx="28" ry="50" transform="rotate(12 1332 808)" fill="#f50a0a" opacity="1" filter="url(#b8)"/>
<ellipse cx="1550" cy="460" rx="200" ry="150" transform="rotate(0 1550 460)" fill="#20dcae" opacity="1" filter="url(#b26)"/>
<ellipse cx="1430" cy="395" rx="70" ry="55" transform="rotate(-20 1430 395)" fill="#28c8cc" opacity="0.85" filter="url(#b18)"/>
<ellipse cx="1590" cy="376" rx="95" ry="38" transform="rotate(8 1590 376)" fill="#1fa650" opacity="1" filter="url(#b18)"/>
<ellipse cx="1610" cy="410" rx="80" ry="42" transform="rotate(10 1610 410)" fill="#1fae52" opacity="0.85" filter="url(#b26)"/>
<ellipse cx="1712" cy="480" rx="20" ry="130" transform="rotate(-5 1712 480)" fill="#2ac268" opacity="0.9" filter="url(#b12)"/>
<ellipse cx="1545" cy="520" rx="140" ry="55" transform="rotate(2 1545 520)" fill="#24f6f8" opacity="1" filter="url(#b18)"/>
<ellipse cx="1640" cy="600" rx="60" ry="60" transform="rotate(0 1640 600)" fill="#22d8e0" opacity="0.9" filter="url(#b18)"/>
<ellipse cx="1380" cy="465" rx="26" ry="95" transform="rotate(-10 1380 465)" fill="#2388dc" opacity="0.95" filter="url(#b12)"/>
<ellipse cx="1400" cy="540" rx="34" ry="60" transform="rotate(-25 1400 540)" fill="#2492e2" opacity="0.9" filter="url(#b18)"/>
<ellipse cx="1470" cy="592" rx="95" ry="28" transform="rotate(18 1470 592)" fill="#2496e4" opacity="0.95" filter="url(#b18)"/>
<ellipse cx="1570" cy="675" rx="130" ry="45" transform="rotate(0 1570 675)" fill="#26ccd8" opacity="0.95" filter="url(#b18)"/>
<ellipse cx="1682" cy="575" rx="22" ry="22" transform="rotate(0 1682 575)" fill="#2590e2" opacity="0.9" filter="url(#b8)"/>
<ellipse cx="1668" cy="535" rx="7" ry="28" transform="rotate(0 1668 535)" fill="#2fcf50" opacity="0.9" filter="url(#b5)"/>
</g><g clip-path="url(#sc)">
<path d="M989.0,757.4C987.1,753.8 980.9,743.4 977.6,736.0C974.3,728.6 971.4,720.6 969.4,712.8C967.4,705.0 966.0,697.6 965.8,689.0C965.6,680.4 966.5,670.8 968.0,661.0C969.5,651.2 972.2,642.5 975.0,630.0C977.8,617.5 982.0,599.3 985.0,586.0C988.0,572.7 989.7,561.5 993.0,550.0C996.3,538.5 1000.4,527.0 1004.6,517.0C1008.8,507.0 1012.4,499.5 1018.0,490.0C1023.6,480.5 1030.8,468.8 1038.0,460.0C1045.2,451.2 1052.8,443.8 1061.0,437.0C1069.2,430.2 1078.5,423.6 1087.0,419.0C1095.5,414.4 1104.5,411.6 1112.0,409.5C1119.5,407.4 1125.8,406.5 1132.0,406.5C1138.2,406.5 1144.3,407.4 1149.5,409.5C1154.7,411.6 1159.4,415.1 1163.0,419.0C1166.6,422.9 1168.8,428.4 1171.0,433.0C1173.2,437.6 1174.0,442.4 1176.0,446.6C1178.0,450.8 1179.9,455.4 1183.0,458.0C1186.1,460.6 1190.0,459.0 1194.5,462.0C1199.0,465.0 1204.4,471.1 1210.0,476.0C1215.6,480.9 1221.8,487.4 1228.0,491.6C1234.2,495.8 1239.5,498.9 1247.0,501.4C1254.5,503.8 1263.8,505.6 1273.0,506.3C1282.2,507.0 1293.9,506.7 1302.0,505.3C1310.1,503.9 1315.7,501.7 1321.5,498.0C1327.3,494.3 1332.7,490.2 1336.6,483.0C1340.5,475.8 1342.1,464.0 1345.0,455.0C1347.9,446.0 1351.1,436.9 1354.0,429.0C1356.9,421.1 1358.2,415.2 1362.5,407.7C1366.8,400.2 1373.9,390.4 1380.0,384.0C1386.1,377.6 1392.2,373.7 1399.0,369.0C1405.8,364.3 1411.9,360.3 1420.6,356.0C1429.3,351.7 1440.6,346.6 1451.0,343.0C1461.4,339.4 1472.3,336.5 1483.0,334.5C1493.7,332.5 1504.2,331.2 1515.0,330.8C1525.8,330.4 1537.2,330.6 1548.0,332.3C1558.8,334.0 1569.3,337.1 1580.0,341.0C1590.7,344.9 1601.2,349.9 1612.0,356.0C1622.8,362.1 1634.9,369.6 1644.6,377.5C1654.3,385.4 1662.1,394.1 1670.0,403.4C1677.9,412.7 1685.8,422.4 1692.0,433.5C1698.2,444.6 1703.0,458.1 1707.0,470.0C1711.0,481.9 1713.5,493.4 1715.7,504.6C1717.9,515.8 1719.8,525.8 1720.0,537.0C1720.2,548.2 1718.8,560.7 1717.0,572.0C1715.2,583.3 1712.5,594.1 1709.0,604.6C1705.5,615.1 1701.3,625.3 1696.0,635.0C1690.7,644.7 1683.8,654.4 1677.0,663.0C1670.2,671.6 1662.5,679.0 1655.0,686.5C1647.5,694.0 1639.5,702.2 1632.0,708.0C1624.5,713.8 1617.2,718.0 1610.0,721.0C1602.8,724.0 1595.8,726.0 1588.6,726.3C1581.4,726.6 1574.2,725.0 1567.0,723.0C1559.8,721.0 1552.7,717.0 1545.5,714.5C1538.3,712.0 1530.8,709.5 1524.0,708.0C1517.2,706.5 1510.8,705.3 1504.6,705.8C1498.4,706.3 1493.1,708.5 1487.0,711.0C1480.9,713.5 1474.0,717.5 1468.0,721.0C1462.0,724.5 1456.8,727.4 1451.0,731.7C1445.2,736.0 1438.9,741.8 1433.5,746.8C1428.1,751.8 1423.6,756.8 1418.5,761.8C1413.4,766.8 1408.0,772.1 1403.0,777.0C1398.0,781.9 1393.2,786.4 1388.5,791.0C1383.8,795.6 1379.0,799.1 1374.7,804.4C1370.5,809.7 1365.0,819.9 1363.0,823.0" fill="none" stroke="#000" stroke-width="24" opacity="0.34" filter="url(#b8)"/>
<path d="M989.0,757.4C987.1,753.8 980.9,743.4 977.6,736.0C974.3,728.6 971.4,720.6 969.4,712.8C967.4,705.0 966.0,697.6 965.8,689.0C965.6,680.4 966.5,670.8 968.0,661.0C969.5,651.2 972.2,642.5 975.0,630.0C977.8,617.5 982.0,599.3 985.0,586.0C988.0,572.7 989.7,561.5 993.0,550.0C996.3,538.5 1000.4,527.0 1004.6,517.0C1008.8,507.0 1012.4,499.5 1018.0,490.0C1023.6,480.5 1030.8,468.8 1038.0,460.0C1045.2,451.2 1052.8,443.8 1061.0,437.0C1069.2,430.2 1078.5,423.6 1087.0,419.0C1095.5,414.4 1104.5,411.6 1112.0,409.5C1119.5,407.4 1125.8,406.5 1132.0,406.5C1138.2,406.5 1144.3,407.4 1149.5,409.5C1154.7,411.6 1159.4,415.1 1163.0,419.0C1166.6,422.9 1168.8,428.4 1171.0,433.0C1173.2,437.6 1174.0,442.4 1176.0,446.6C1178.0,450.8 1179.9,455.4 1183.0,458.0C1186.1,460.6 1190.0,459.0 1194.5,462.0C1199.0,465.0 1204.4,471.1 1210.0,476.0C1215.6,480.9 1221.8,487.4 1228.0,491.6C1234.2,495.8 1239.5,498.9 1247.0,501.4C1254.5,503.8 1263.8,505.6 1273.0,506.3C1282.2,507.0 1293.9,506.7 1302.0,505.3C1310.1,503.9 1315.7,501.7 1321.5,498.0C1327.3,494.3 1332.7,490.2 1336.6,483.0C1340.5,475.8 1342.1,464.0 1345.0,455.0C1347.9,446.0 1351.1,436.9 1354.0,429.0C1356.9,421.1 1358.2,415.2 1362.5,407.7C1366.8,400.2 1373.9,390.4 1380.0,384.0C1386.1,377.6 1392.2,373.7 1399.0,369.0C1405.8,364.3 1411.9,360.3 1420.6,356.0C1429.3,351.7 1440.6,346.6 1451.0,343.0C1461.4,339.4 1472.3,336.5 1483.0,334.5C1493.7,332.5 1504.2,331.2 1515.0,330.8C1525.8,330.4 1537.2,330.6 1548.0,332.3C1558.8,334.0 1569.3,337.1 1580.0,341.0C1590.7,344.9 1601.2,349.9 1612.0,356.0C1622.8,362.1 1634.9,369.6 1644.6,377.5C1654.3,385.4 1662.1,394.1 1670.0,403.4C1677.9,412.7 1685.8,422.4 1692.0,433.5C1698.2,444.6 1703.0,458.1 1707.0,470.0C1711.0,481.9 1713.5,493.4 1715.7,504.6C1717.9,515.8 1719.8,525.8 1720.0,537.0C1720.2,548.2 1718.8,560.7 1717.0,572.0C1715.2,583.3 1712.5,594.1 1709.0,604.6C1705.5,615.1 1701.3,625.3 1696.0,635.0C1690.7,644.7 1683.8,654.4 1677.0,663.0C1670.2,671.6 1662.5,679.0 1655.0,686.5C1647.5,694.0 1639.5,702.2 1632.0,708.0C1624.5,713.8 1617.2,718.0 1610.0,721.0C1602.8,724.0 1595.8,726.0 1588.6,726.3C1581.4,726.6 1574.2,725.0 1567.0,723.0C1559.8,721.0 1552.7,717.0 1545.5,714.5C1538.3,712.0 1530.8,709.5 1524.0,708.0C1517.2,706.5 1510.8,705.3 1504.6,705.8C1498.4,706.3 1493.1,708.5 1487.0,711.0C1480.9,713.5 1474.0,717.5 1468.0,721.0C1462.0,724.5 1456.8,727.4 1451.0,731.7C1445.2,736.0 1438.9,741.8 1433.5,746.8C1428.1,751.8 1423.6,756.8 1418.5,761.8C1413.4,766.8 1408.0,772.1 1403.0,777.0C1398.0,781.9 1393.2,786.4 1388.5,791.0C1383.8,795.6 1379.0,799.1 1374.7,804.4C1370.5,809.7 1365.0,819.9 1363.0,823.0" fill="none" stroke="#000" stroke-width="6" opacity="0.35" filter="url(#b3)"/>
<path d="M1363.0,823.0C1361.0,825.2 1356.5,832.7 1351.0,836.0C1345.5,839.3 1337.4,841.3 1330.0,843.0C1322.6,844.7 1314.7,845.4 1306.5,846.0C1298.3,846.6 1289.7,847.0 1280.7,846.7C1271.7,846.4 1263.1,845.6 1252.5,844.4C1241.9,843.2 1229.1,841.5 1217.0,839.7C1204.9,837.9 1192.6,836.1 1179.7,833.8C1166.8,831.4 1153.0,828.7 1139.7,825.6C1126.4,822.5 1112.3,818.8 1099.8,815.0C1087.3,811.2 1075.5,807.2 1064.5,803.0C1053.5,798.8 1043.4,794.5 1034.0,790.0C1024.6,785.5 1015.5,781.4 1008.0,776.0C1000.5,770.6 992.2,760.5 989.0,757.4" fill="none" stroke="#000" stroke-width="5" opacity="0.25" filter="url(#b3)"/>
<path d="M1178.0,450.0C1177.7,454.0 1177.5,466.2 1176.0,474.0C1174.5,481.8 1172.2,489.8 1169.0,497.0C1165.8,504.2 1161.5,510.7 1157.0,517.0C1152.5,523.3 1146.2,529.2 1142.0,535.0C1137.8,540.8 1134.3,545.2 1132.0,552.0C1129.7,558.8 1127.3,568.5 1128.0,576.0C1128.7,583.5 1132.0,590.5 1136.0,597.0C1140.0,603.5 1146.0,609.8 1152.0,615.0C1158.0,620.2 1168.7,625.8 1172.0,628.0" fill="none" stroke="#000" stroke-width="4.5" opacity="0.85" filter="url(#b2)" transform="translate(1.5,0.5)"/>
<path d="M1178.0,450.0C1177.7,454.0 1177.5,466.2 1176.0,474.0C1174.5,481.8 1172.2,489.8 1169.0,497.0C1165.8,504.2 1161.5,510.7 1157.0,517.0C1152.5,523.3 1146.2,529.2 1142.0,535.0C1137.8,540.8 1134.3,545.2 1132.0,552.0C1129.7,558.8 1127.3,568.5 1128.0,576.0C1128.7,583.5 1132.0,590.5 1136.0,597.0C1140.0,603.5 1146.0,609.8 1152.0,615.0C1158.0,620.2 1168.7,625.8 1172.0,628.0" fill="none" stroke="#001808" stroke-width="13" opacity="0.36" filter="url(#b5)" transform="translate(7,2)"/>
<path d="M1338.0,478.0C1338.7,485.0 1339.7,505.3 1342.0,520.0C1344.3,534.7 1347.3,552.3 1352.0,566.0C1356.7,579.7 1362.3,591.0 1370.0,602.0C1377.7,613.0 1387.0,622.3 1398.0,632.0C1409.0,641.7 1424.0,651.0 1436.0,660.0C1448.0,669.0 1459.3,678.7 1470.0,686.0C1480.7,693.3 1495.0,701.0 1500.0,704.0" fill="none" stroke="#00180c" stroke-width="22" opacity="0.5" filter="url(#b8)" transform="translate(-7,7)"/>
<path d="M1370.0,602.0C1374.7,607.0 1387.0,622.3 1398.0,632.0C1409.0,641.7 1424.0,651.0 1436.0,660.0C1448.0,669.0 1459.3,678.7 1470.0,686.0C1480.7,693.3 1495.0,701.0 1500.0,704.0" fill="none" stroke="#001" stroke-width="6" opacity="0.5" filter="url(#b3)" transform="translate(-2,3)"/>
</g><g>
<g><use href="#dt" x="1044.6" y="521.5"/><use href="#dt" x="1033.3" y="555.5"/><use href="#dt" x="1019.7" y="592.3"/><use href="#dt" x="1011.2" y="630.7"/><use href="#dt" x="1076.2" y="490.6"/><use href="#dt" x="1061.1" y="506.6"/><use href="#dt" x="1063.3" y="527.6"/><use href="#dt" x="1046.8" y="542.2"/><use href="#dt" x="1052.0" y="565.4"/><use href="#dt" x="1036.1" y="580.7"/><use href="#dt" x="1044.2" y="599.3"/><use href="#dt" x="1024.3" y="615.9"/><use href="#dt" x="1030.4" y="639.1"/><use href="#dt" x="1015.6" y="654.3"/><use href="#dt" x="1020.0" y="673.9"/><use href="#dt" x="1002.8" y="692.4"/><use href="#dt" x="1010.0" y="711.7"/><use href="#dt" x="995.4" y="750.5"/><use href="#dt" x="1107.6" y="458.5"/><use href="#dt" x="1093.8" y="473.0"/><use href="#dt" x="1098.0" y="495.6"/><use href="#dt" x="1083.9" y="511.4"/><use href="#dt" x="1088.2" y="533.1"/><use href="#dt" x="1072.5" y="547.3"/><use href="#dt" x="1076.9" y="571.4"/><use href="#dt" x="1059.0" y="585.7"/><use href="#dt" x="1063.0" y="608.4"/><use href="#dt" x="1049.0" y="623.5"/><use href="#dt" x="1052.0" y="643.3"/><use href="#dt" x="1034.7" y="658.6"/><use href="#dt" x="1041.8" y="679.9"/><use href="#dt" x="1025.7" y="699.6"/><use href="#dt" x="1030.0" y="720.2"/><use href="#dt" x="1012.7" y="732.9"/><use href="#dt" x="1016.9" y="755.7"/><use href="#dt" x="1126.5" y="444.2"/><use href="#dt" x="1132.1" y="465.0"/><use href="#dt" x="1113.1" y="481.1"/><use href="#dt" x="1117.7" y="503.6"/><use href="#dt" x="1104.3" y="518.4"/><use href="#dt" x="1110.5" y="539.1"/><use href="#dt" x="1092.9" y="554.0"/><use href="#dt" x="1097.8" y="578.1"/><use href="#dt" x="1078.5" y="591.7"/><use href="#dt" x="1085.4" y="615.0"/><use href="#dt" x="1070.9" y="630.0"/><use href="#dt" x="1075.9" y="650.3"/><use href="#dt" x="1059.5" y="665.9"/><use href="#dt" x="1062.9" y="687.5"/><use href="#dt" x="1047.4" y="705.2"/><use href="#dt" x="1051.8" y="725.1"/><use href="#dt" x="1035.4" y="739.5"/><use href="#dt" x="1041.8" y="762.0"/><use href="#dt" x="1136.6" y="487.2"/><use href="#dt" x="1140.5" y="509.8"/><use href="#dt" x="1123.1" y="522.5"/><use href="#dt" x="1130.5" y="548.3"/><use href="#dt" x="1113.0" y="559.5"/><use href="#dt" x="1120.2" y="583.7"/><use href="#dt" x="1102.5" y="599.7"/><use href="#dt" x="1107.0" y="622.1"/><use href="#dt" x="1091.9" y="636.5"/><use href="#dt" x="1093.7" y="657.0"/><use href="#dt" x="1081.3" y="674.8"/><use href="#dt" x="1084.7" y="696.6"/><use href="#dt" x="1067.4" y="710.4"/><use href="#dt" x="1071.6" y="732.8"/><use href="#dt" x="1057.2" y="749.4"/><use href="#dt" x="1060.9" y="770.9"/><use href="#dt" x="1046.0" y="785.4"/><use href="#dt" x="1158.2" y="494.6"/><use href="#dt" x="1162.0" y="514.7"/><use href="#dt" x="1147.6" y="530.0"/><use href="#dt" x="1149.8" y="551.0"/><use href="#dt" x="1136.6" y="567.7"/><use href="#dt" x="1139.4" y="591.3"/><use href="#dt" x="1125.5" y="606.6"/><use href="#dt" x="1129.2" y="625.1"/><use href="#dt" x="1111.5" y="642.8"/><use href="#dt" x="1117.2" y="664.6"/><use href="#dt" x="1098.6" y="682.0"/><use href="#dt" x="1106.2" y="702.5"/><use href="#dt" x="1089.7" y="716.1"/><use href="#dt" x="1095.2" y="737.8"/><use href="#dt" x="1077.5" y="754.4"/><use href="#dt" x="1084.2" y="776.0"/><use href="#dt" x="1065.8" y="793.7"/><use href="#dt" x="1179.1" y="501.0"/><use href="#dt" x="1185.1" y="520.5"/><use href="#dt" x="1166.1" y="536.3"/><use href="#dt" x="1174.8" y="558.0"/><use href="#dt" x="1156.5" y="573.1"/><use href="#dt" x="1162.9" y="595.6"/><use href="#dt" x="1143.6" y="610.7"/><use href="#dt" x="1149.8" y="634.9"/><use href="#dt" x="1132.9" y="650.5"/><use href="#dt" x="1138.9" y="672.8"/><use href="#dt" x="1123.3" y="685.7"/><use href="#dt" x="1126.9" y="707.5"/><use href="#dt" x="1111.8" y="724.4"/><use href="#dt" x="1116.0" y="746.4"/><use href="#dt" x="1101.4" y="761.1"/><use href="#dt" x="1106.5" y="781.3"/><use href="#dt" x="1087.8" y="799.7"/><use href="#dt" x="1205.9" y="530.4"/><use href="#dt" x="1189.9" y="545.7"/><use href="#dt" x="1196.1" y="565.1"/><use href="#dt" x="1179.4" y="583.3"/><use href="#dt" x="1182.0" y="604.0"/><use href="#dt" x="1167.8" y="616.7"/><use href="#dt" x="1172.3" y="638.4"/><use href="#dt" x="1154.0" y="654.1"/><use href="#dt" x="1161.1" y="678.8"/><use href="#dt" x="1143.5" y="694.8"/><use href="#dt" x="1147.8" y="713.6"/><use href="#dt" x="1133.4" y="732.2"/><use href="#dt" x="1136.4" y="753.8"/><use href="#dt" x="1122.2" y="766.2"/><use href="#dt" x="1127.2" y="790.4"/><use href="#dt" x="1111.7" y="804.9"/><use href="#dt" x="1225.8" y="535.9"/><use href="#dt" x="1209.1" y="552.7"/><use href="#dt" x="1215.3" y="573.8"/><use href="#dt" x="1200.7" y="589.0"/><use href="#dt" x="1206.0" y="608.8"/><use href="#dt" x="1187.9" y="624.9"/><use href="#dt" x="1191.2" y="645.7"/><use href="#dt" x="1177.4" y="661.5"/><use href="#dt" x="1181.4" y="684.6"/><use href="#dt" x="1165.4" y="697.5"/><use href="#dt" x="1169.3" y="721.8"/><use href="#dt" x="1152.2" y="735.3"/><use href="#dt" x="1157.3" y="756.7"/><use href="#dt" x="1141.0" y="775.1"/><use href="#dt" x="1146.1" y="794.2"/><use href="#dt" x="1131.7" y="812.7"/><use href="#dt" x="1247.5" y="542.8"/><use href="#dt" x="1232.2" y="555.9"/><use href="#dt" x="1238.5" y="580.9"/><use href="#dt" x="1220.8" y="595.1"/><use href="#dt" x="1225.6" y="615.8"/><use href="#dt" x="1208.3" y="632.4"/><use href="#dt" x="1215.8" y="655.2"/><use href="#dt" x="1198.6" y="670.8"/><use href="#dt" x="1204.1" y="691.4"/><use href="#dt" x="1188.3" y="705.7"/><use href="#dt" x="1193.4" y="727.2"/><use href="#dt" x="1177.5" y="745.5"/><use href="#dt" x="1178.5" y="765.0"/><use href="#dt" x="1164.4" y="778.9"/><use href="#dt" x="1170.4" y="802.2"/><use href="#dt" x="1153.9" y="816.2"/><use href="#dt" x="1270.2" y="549.8"/><use href="#dt" x="1254.7" y="562.2"/><use href="#dt" x="1260.4" y="583.6"/><use href="#dt" x="1241.7" y="602.4"/><use href="#dt" x="1246.3" y="622.6"/><use href="#dt" x="1232.0" y="639.3"/><use href="#dt" x="1237.9" y="659.0"/><use href="#dt" x="1221.0" y="676.5"/><use href="#dt" x="1225.5" y="699.4"/><use href="#dt" x="1206.5" y="712.5"/><use href="#dt" x="1213.7" y="736.4"/><use href="#dt" x="1197.9" y="750.1"/><use href="#dt" x="1202.1" y="770.5"/><use href="#dt" x="1186.2" y="788.5"/><use href="#dt" x="1192.3" y="810.7"/><use href="#dt" x="1292.3" y="556.0"/><use href="#dt" x="1276.1" y="568.5"/><use href="#dt" x="1278.8" y="593.3"/><use href="#dt" x="1263.3" y="608.4"/><use href="#dt" x="1267.6" y="630.0"/><use href="#dt" x="1254.2" y="645.8"/><use href="#dt" x="1259.0" y="667.6"/><use href="#dt" x="1240.8" y="681.4"/><use href="#dt" x="1244.8" y="702.3"/><use href="#dt" x="1228.1" y="717.7"/><use href="#dt" x="1233.0" y="741.3"/><use href="#dt" x="1220.2" y="757.5"/><use href="#dt" x="1221.6" y="779.1"/><use href="#dt" x="1206.8" y="792.3"/><use href="#dt" x="1213.8" y="814.1"/><use href="#dt" x="1310.5" y="539.4"/><use href="#dt" x="1313.6" y="559.7"/><use href="#dt" x="1298.0" y="577.0"/><use href="#dt" x="1303.1" y="598.3"/><use href="#dt" x="1286.2" y="614.5"/><use href="#dt" x="1290.4" y="634.0"/><use href="#dt" x="1273.6" y="649.8"/><use href="#dt" x="1277.2" y="673.3"/><use href="#dt" x="1261.8" y="687.4"/><use href="#dt" x="1268.2" y="710.6"/><use href="#dt" x="1250.7" y="726.8"/><use href="#dt" x="1256.6" y="746.9"/><use href="#dt" x="1241.8" y="761.9"/><use href="#dt" x="1245.7" y="783.8"/><use href="#dt" x="1226.8" y="800.5"/><use href="#dt" x="1235.4" y="822.1"/><use href="#dt" x="1348.1" y="531.6"/><use href="#dt" x="1331.8" y="545.1"/><use href="#dt" x="1336.8" y="569.8"/><use href="#dt" x="1318.4" y="584.2"/><use href="#dt" x="1324.7" y="605.3"/><use href="#dt" x="1306.7" y="621.8"/><use href="#dt" x="1312.1" y="642.8"/><use href="#dt" x="1295.1" y="659.8"/><use href="#dt" x="1301.8" y="679.5"/><use href="#dt" x="1285.1" y="695.1"/><use href="#dt" x="1290.8" y="716.9"/><use href="#dt" x="1272.7" y="731.5"/><use href="#dt" x="1278.6" y="753.0"/><use href="#dt" x="1262.1" y="768.3"/><use href="#dt" x="1267.5" y="790.8"/><use href="#dt" x="1252.2" y="808.5"/><use href="#dt" x="1256.3" y="829.5"/><use href="#dt" x="1400.4" y="423.6"/><use href="#dt" x="1387.6" y="440.2"/><use href="#dt" x="1392.8" y="462.9"/><use href="#dt" x="1372.6" y="476.5"/><use href="#dt" x="1381.2" y="498.6"/><use href="#dt" x="1364.6" y="514.6"/><use href="#dt" x="1368.3" y="535.2"/><use href="#dt" x="1350.9" y="550.9"/><use href="#dt" x="1354.3" y="574.7"/><use href="#dt" x="1339.6" y="590.9"/><use href="#dt" x="1346.3" y="613.3"/><use href="#dt" x="1330.1" y="628.7"/><use href="#dt" x="1332.3" y="649.9"/><use href="#dt" x="1317.4" y="665.6"/><use href="#dt" x="1323.8" y="685.2"/><use href="#dt" x="1306.1" y="699.7"/><use href="#dt" x="1311.2" y="725.7"/><use href="#dt" x="1296.4" y="740.2"/><use href="#dt" x="1299.4" y="760.7"/><use href="#dt" x="1285.0" y="774.7"/><use href="#dt" x="1286.8" y="798.3"/><use href="#dt" x="1272.7" y="811.9"/><use href="#dt" x="1275.1" y="835.2"/><use href="#dt" x="1436.0" y="395.3"/><use href="#dt" x="1419.9" y="408.8"/><use href="#dt" x="1423.8" y="432.2"/><use href="#dt" x="1405.3" y="446.2"/><use href="#dt" x="1411.9" y="469.1"/><use href="#dt" x="1394.3" y="482.9"/><use href="#dt" x="1398.8" y="508.4"/><use href="#dt" x="1385.2" y="523.9"/><use href="#dt" x="1387.7" y="543.9"/><use href="#dt" x="1374.8" y="561.0"/><use href="#dt" x="1378.0" y="580.3"/><use href="#dt" x="1361.7" y="597.7"/><use href="#dt" x="1365.3" y="617.2"/><use href="#dt" x="1349.7" y="632.6"/><use href="#dt" x="1355.2" y="655.4"/><use href="#dt" x="1336.6" y="671.4"/><use href="#dt" x="1344.3" y="693.1"/><use href="#dt" x="1327.3" y="707.1"/><use href="#dt" x="1331.5" y="730.7"/><use href="#dt" x="1313.9" y="745.7"/><use href="#dt" x="1322.4" y="768.7"/><use href="#dt" x="1306.4" y="781.5"/><use href="#dt" x="1309.9" y="803.5"/><use href="#dt" x="1292.9" y="820.3"/><use href="#dt" x="1452.2" y="381.6"/><use href="#dt" x="1455.5" y="401.7"/><use href="#dt" x="1439.2" y="416.9"/><use href="#dt" x="1444.0" y="439.1"/><use href="#dt" x="1426.4" y="456.2"/><use href="#dt" x="1435.2" y="477.9"/><use href="#dt" x="1415.1" y="489.6"/><use href="#dt" x="1422.3" y="514.1"/><use href="#dt" x="1405.2" y="529.1"/><use href="#dt" x="1413.1" y="550.5"/><use href="#dt" x="1395.1" y="564.3"/><use href="#dt" x="1398.6" y="588.3"/><use href="#dt" x="1383.2" y="605.1"/><use href="#dt" x="1386.4" y="624.7"/><use href="#dt" x="1371.2" y="640.8"/><use href="#dt" x="1378.3" y="663.1"/><use href="#dt" x="1360.5" y="679.0"/><use href="#dt" x="1367.4" y="697.8"/><use href="#dt" x="1348.0" y="714.1"/><use href="#dt" x="1353.4" y="738.5"/><use href="#dt" x="1337.7" y="753.1"/><use href="#dt" x="1343.0" y="772.4"/><use href="#dt" x="1325.4" y="790.8"/><use href="#dt" x="1331.0" y="812.0"/><use href="#dt" x="1316.2" y="828.9"/><use href="#dt" x="1490.9" y="371.0"/><use href="#dt" x="1471.6" y="384.1"/><use href="#dt" x="1478.8" y="407.0"/><use href="#dt" x="1461.1" y="421.2"/><use href="#dt" x="1468.1" y="443.1"/><use href="#dt" x="1450.7" y="461.5"/><use href="#dt" x="1456.3" y="481.7"/><use href="#dt" x="1439.9" y="496.0"/><use href="#dt" x="1443.3" y="519.3"/><use href="#dt" x="1425.8" y="535.2"/><use href="#dt" x="1434.0" y="557.4"/><use href="#dt" x="1415.3" y="572.5"/><use href="#dt" x="1422.8" y="592.8"/><use href="#dt" x="1406.1" y="608.9"/><use href="#dt" x="1409.5" y="629.9"/><use href="#dt" x="1394.8" y="647.7"/><use href="#dt" x="1399.7" y="667.3"/><use href="#dt" x="1381.3" y="683.2"/><use href="#dt" x="1386.6" y="706.9"/><use href="#dt" x="1372.3" y="721.5"/><use href="#dt" x="1373.8" y="743.2"/><use href="#dt" x="1360.0" y="757.2"/><use href="#dt" x="1354.0" y="818.7"/><use href="#dt" x="1511.5" y="377.8"/><use href="#dt" x="1493.7" y="393.0"/><use href="#dt" x="1498.5" y="413.9"/><use href="#dt" x="1483.9" y="430.5"/><use href="#dt" x="1487.3" y="452.5"/><use href="#dt" x="1472.2" y="469.4"/><use href="#dt" x="1475.7" y="489.0"/><use href="#dt" x="1459.9" y="504.2"/><use href="#dt" x="1467.4" y="527.2"/><use href="#dt" x="1450.8" y="542.0"/><use href="#dt" x="1455.5" y="564.7"/><use href="#dt" x="1438.9" y="579.7"/><use href="#dt" x="1441.5" y="599.6"/><use href="#dt" x="1426.0" y="617.7"/><use href="#dt" x="1430.0" y="638.3"/><use href="#dt" x="1413.7" y="653.4"/><use href="#dt" x="1419.0" y="677.6"/><use href="#dt" x="1402.1" y="689.2"/><use href="#dt" x="1408.1" y="713.1"/><use href="#dt" x="1394.0" y="726.8"/><use href="#dt" x="1528.2" y="363.2"/><use href="#dt" x="1532.5" y="382.1"/><use href="#dt" x="1518.1" y="398.1"/><use href="#dt" x="1520.7" y="420.8"/><use href="#dt" x="1505.1" y="436.1"/><use href="#dt" x="1510.3" y="457.0"/><use href="#dt" x="1493.4" y="472.1"/><use href="#dt" x="1497.2" y="496.8"/><use href="#dt" x="1483.9" y="511.9"/><use href="#dt" x="1488.6" y="534.7"/><use href="#dt" x="1469.3" y="548.6"/><use href="#dt" x="1475.7" y="571.6"/><use href="#dt" x="1456.8" y="587.7"/><use href="#dt" x="1462.7" y="607.4"/><use href="#dt" x="1446.9" y="623.8"/><use href="#dt" x="1454.3" y="645.5"/><use href="#dt" x="1438.0" y="660.4"/><use href="#dt" x="1443.4" y="679.9"/><use href="#dt" x="1424.1" y="695.9"/><use href="#dt" x="1549.4" y="368.7"/><use href="#dt" x="1552.9" y="391.2"/><use href="#dt" x="1538.6" y="405.0"/><use href="#dt" x="1541.1" y="425.9"/><use href="#dt" x="1527.7" y="442.0"/><use href="#dt" x="1533.2" y="463.1"/><use href="#dt" x="1514.2" y="478.4"/><use href="#dt" x="1520.1" y="500.2"/><use href="#dt" x="1503.0" y="515.7"/><use href="#dt" x="1510.1" y="538.3"/><use href="#dt" x="1492.8" y="554.6"/><use href="#dt" x="1497.4" y="576.7"/><use href="#dt" x="1481.7" y="591.0"/><use href="#dt" x="1483.5" y="613.1"/><use href="#dt" x="1468.7" y="627.6"/><use href="#dt" x="1472.8" y="650.5"/><use href="#dt" x="1458.5" y="664.9"/><use href="#dt" x="1461.8" y="687.2"/><use href="#dt" x="1571.8" y="374.6"/><use href="#dt" x="1577.1" y="397.8"/><use href="#dt" x="1560.1" y="410.4"/><use href="#dt" x="1564.8" y="434.3"/><use href="#dt" x="1549.5" y="450.8"/><use href="#dt" x="1552.1" y="470.8"/><use href="#dt" x="1536.0" y="485.8"/><use href="#dt" x="1543.1" y="506.8"/><use href="#dt" x="1525.2" y="522.8"/><use href="#dt" x="1528.3" y="545.8"/><use href="#dt" x="1511.7" y="563.0"/><use href="#dt" x="1517.1" y="583.5"/><use href="#dt" x="1503.9" y="596.6"/><use href="#dt" x="1507.6" y="622.0"/><use href="#dt" x="1490.7" y="636.2"/><use href="#dt" x="1494.7" y="659.9"/><use href="#dt" x="1479.2" y="672.6"/><use href="#dt" x="1589.8" y="380.7"/><use href="#dt" x="1597.5" y="405.2"/><use href="#dt" x="1582.4" y="419.1"/><use href="#dt" x="1586.9" y="442.9"/><use href="#dt" x="1568.9" y="456.9"/><use href="#dt" x="1575.1" y="478.6"/><use href="#dt" x="1558.6" y="493.6"/><use href="#dt" x="1562.8" y="514.9"/><use href="#dt" x="1547.7" y="529.4"/><use href="#dt" x="1553.1" y="554.2"/><use href="#dt" x="1535.7" y="568.6"/><use href="#dt" x="1539.2" y="588.5"/><use href="#dt" x="1523.3" y="605.4"/><use href="#dt" x="1530.6" y="628.2"/><use href="#dt" x="1514.0" y="642.5"/><use href="#dt" x="1517.7" y="663.1"/><use href="#dt" x="1617.1" y="409.7"/><use href="#dt" x="1600.0" y="424.4"/><use href="#dt" x="1608.3" y="446.8"/><use href="#dt" x="1591.0" y="464.3"/><use href="#dt" x="1596.8" y="485.2"/><use href="#dt" x="1580.1" y="502.0"/><use href="#dt" x="1585.7" y="520.3"/><use href="#dt" x="1567.8" y="535.2"/><use href="#dt" x="1573.7" y="559.5"/><use href="#dt" x="1555.3" y="575.0"/><use href="#dt" x="1559.6" y="596.8"/><use href="#dt" x="1545.7" y="611.4"/><use href="#dt" x="1548.5" y="632.9"/><use href="#dt" x="1532.4" y="649.8"/><use href="#dt" x="1540.2" y="671.5"/><use href="#dt" x="1638.1" y="418.5"/><use href="#dt" x="1624.8" y="430.5"/><use href="#dt" x="1628.2" y="455.9"/><use href="#dt" x="1611.3" y="467.6"/><use href="#dt" x="1616.8" y="489.8"/><use href="#dt" x="1601.2" y="504.6"/><use href="#dt" x="1604.5" y="528.9"/><use href="#dt" x="1588.6" y="543.7"/><use href="#dt" x="1594.6" y="567.7"/><use href="#dt" x="1576.2" y="579.8"/><use href="#dt" x="1584.4" y="604.0"/><use href="#dt" x="1568.3" y="618.5"/><use href="#dt" x="1570.4" y="641.2"/><use href="#dt" x="1554.3" y="657.5"/><use href="#dt" x="1561.6" y="679.2"/><use href="#dt" x="1643.9" y="438.3"/><use href="#dt" x="1649.8" y="461.3"/><use href="#dt" x="1634.5" y="474.4"/><use href="#dt" x="1640.0" y="498.8"/><use href="#dt" x="1620.4" y="512.1"/><use href="#dt" x="1629.0" y="534.7"/><use href="#dt" x="1613.1" y="551.9"/><use href="#dt" x="1617.4" y="571.0"/><use href="#dt" x="1597.4" y="585.9"/><use href="#dt" x="1602.6" y="607.6"/><use href="#dt" x="1587.4" y="623.2"/><use href="#dt" x="1595.1" y="646.3"/><use href="#dt" x="1577.3" y="663.8"/><use href="#dt" x="1580.5" y="685.8"/><use href="#dt" x="1671.0" y="465.9"/><use href="#dt" x="1656.2" y="483.8"/><use href="#dt" x="1662.0" y="506.7"/><use href="#dt" x="1644.2" y="519.5"/><use href="#dt" x="1647.7" y="543.3"/><use href="#dt" x="1632.9" y="558.5"/><use href="#dt" x="1638.2" y="578.7"/><use href="#dt" x="1621.7" y="593.1"/><use href="#dt" x="1625.9" y="616.1"/><use href="#dt" x="1609.9" y="630.8"/><use href="#dt" x="1616.7" y="652.6"/><use href="#dt" x="1597.6" y="670.3"/><use href="#dt" x="1675.3" y="488.1"/><use href="#dt" x="1679.6" y="512.6"/><use href="#dt" x="1667.3" y="525.0"/><use href="#dt" x="1670.4" y="547.3"/><use href="#dt" x="1656.1" y="565.8"/><use href="#dt" x="1657.8" y="586.2"/><use href="#dt" x="1642.3" y="601.1"/><use href="#dt" x="1646.2" y="621.8"/><use href="#dt" x="1630.4" y="639.2"/><use href="#dt" x="1636.2" y="659.3"/><use href="#dt" x="1619.2" y="676.7"/><use href="#dt" x="1687.4" y="533.0"/><use href="#dt" x="1677.4" y="570.3"/><use href="#dt" x="1662.9" y="607.9"/></g>
<g><use href="#ds" x="986.8" y="688.4"/><use href="#ds" x="989.0" y="704.6"/><use href="#ds" x="994.3" y="721.5"/><use href="#ds" x="1354.5" y="796.7"/><use href="#ds" x="1365.3" y="783.7"/><use href="#ds" x="1376.9" y="773.0"/><use href="#ds" x="1387.9" y="762.4"/><use href="#ds" x="1399.1" y="751.5"/><use href="#ds" x="1412.2" y="738.2"/><use href="#ds" x="1425.3" y="725.9"/><use href="#ds" x="1439.5" y="714.1"/><use href="#ds" x="1452.2" y="705.9"/><use href="#ds" x="1466.9" y="697.5"/><use href="#ds" x="1481.1" y="690.7"/><use href="#ds" x="1498.9" y="685.4"/><use href="#ds" x="1516.5" y="685.3"/><use href="#ds" x="1534.8" y="689.0"/><use href="#ds" x="1552.4" y="694.7"/><use href="#ds" x="1567.9" y="701.1"/><use href="#ds" x="1584.2" y="705.2"/><use href="#ds" x="1600.0" y="702.4"/><use href="#ds" x="1615.3" y="694.2"/><use href="#ds" x="1628.0" y="683.6"/><use href="#ds" x="1640.4" y="671.4"/><use href="#ds" x="1653.0" y="658.6"/><use href="#ds" x="1663.9" y="645.6"/><use href="#ds" x="1673.9" y="631.2"/><use href="#ds" x="1681.5" y="617.2"/><use href="#ds" x="1687.3" y="603.1"/><use href="#ds" x="1692.9" y="585.0"/><use href="#ds" x="1696.2" y="569.2"/><use href="#ds" x="1698.4" y="551.7"/><use href="#ds" x="1698.9" y="535.0"/><use href="#ds" x="1696.9" y="518.1"/><use href="#ds" x="1693.9" y="502.5"/><use href="#ds" x="1689.5" y="484.6"/><use href="#ds" x="1683.6" y="466.7"/><use href="#ds" x="1676.5" y="449.3"/><use href="#ds" x="1667.6" y="434.2"/><use href="#ds" x="1658.1" y="421.9"/><use href="#ds" x="1647.1" y="409.1"/><use href="#ds" x="1635.8" y="397.7"/><use href="#ds" x="1623.2" y="387.7"/><use href="#ds" x="1609.2" y="378.6"/><use href="#ds" x="1592.7" y="369.5"/><use href="#ds" x="1578.5" y="363.0"/><use href="#ds" x="1560.8" y="356.7"/><use href="#ds" x="1544.1" y="353.0"/><use href="#ds" x="1528.5" y="351.7"/><use href="#ds" x="1512.8" y="351.9"/><use href="#ds" x="1495.8" y="353.6"/><use href="#ds" x="1479.6" y="356.7"/><use href="#ds" x="1461.4" y="361.7"/><use href="#ds" x="1445.1" y="367.8"/><use href="#ds" x="1429.3" y="375.1"/><use href="#ds" x="1414.0" y="384.2"/><use href="#ds" x="1400.6" y="393.6"/><use href="#ds" x="1387.9" y="407.4"/><use href="#ds" x="1378.4" y="422.9"/><use href="#ds" x="1372.2" y="440.3"/><use href="#ds" x="1366.4" y="457.1"/><use href="#ds" x="1362.2" y="472.2"/><use href="#ds" x="1357.0" y="488.7"/><use href="#ds" x="1348.7" y="502.2"/><use href="#ds" x="1335.7" y="513.7"/><use href="#ds" x="1322.1" y="521.3"/><use href="#ds" x="1305.0" y="526.1"/><use href="#ds" x="1287.7" y="527.5"/><use href="#ds" x="1270.3" y="527.1"/><use href="#ds" x="1252.5" y="524.6"/><use href="#ds" x="1235.5" y="519.5"/><use href="#ds" x="1220.6" y="511.9"/><use href="#ds" x="1205.6" y="500.4"/><use href="#ds" x="1191.7" y="487.7"/><use href="#ds" x="1179.3" y="479.3"/><use href="#ds" x="1165.3" y="469.8"/><use href="#ds" x="1156.1" y="453.3"/><use href="#ds" x="1150.5" y="438.7"/><use href="#ds" x="1138.8" y="428.2"/><use href="#ds" x="1122.8" y="428.5"/><use href="#ds" x="1105.7" y="433.6"/><use href="#ds" x="1089.2" y="442.2"/><use href="#ds" x="1076.7" y="451.3"/><use href="#ds" x="1065.3" y="461.3"/><use href="#ds" x="1054.7" y="472.7"/><use href="#ds" x="1044.0" y="487.8"/><use href="#ds" x="1035.8" y="501.2"/><use href="#ds" x="1027.9" y="516.2"/><use href="#ds" x="1021.6" y="531.1"/><use href="#ds" x="1016.3" y="545.8"/><use href="#ds" x="1011.6" y="562.0"/><use href="#ds" x="1008.1" y="578.1"/><use href="#ds" x="1004.5" y="595.0"/><use href="#ds" x="1000.5" y="612.5"/><use href="#ds" x="997.1" y="627.5"/><use href="#ds" x="993.5" y="642.9"/><use href="#ds" x="990.0" y="657.5"/><use href="#ds" x="987.5" y="673.5"/></g>
<g><use href="#ds" x="974.8" y="688.7"/><use href="#ds" x="976.2" y="702.0"/><use href="#ds" x="978.7" y="712.8"/><use href="#ds" x="982.7" y="724.7"/><use href="#ds" x="987.1" y="735.2"/><use href="#ds" x="1363.1" y="805.6"/><use href="#ds" x="1371.1" y="794.9"/><use href="#ds" x="1381.0" y="785.6"/><use href="#ds" x="1391.1" y="776.0"/><use href="#ds" x="1400.9" y="766.5"/><use href="#ds" x="1410.1" y="757.4"/><use href="#ds" x="1418.6" y="748.9"/><use href="#ds" x="1428.6" y="739.1"/><use href="#ds" x="1436.8" y="731.7"/><use href="#ds" x="1447.7" y="723.0"/><use href="#ds" x="1456.9" y="717.0"/><use href="#ds" x="1467.3" y="711.0"/><use href="#ds" x="1477.0" y="705.8"/><use href="#ds" x="1487.8" y="700.9"/><use href="#ds" x="1500.9" y="697.2"/><use href="#ds" x="1514.8" y="697.2"/><use href="#ds" x="1528.1" y="699.7"/><use href="#ds" x="1540.8" y="703.4"/><use href="#ds" x="1552.2" y="707.4"/><use href="#ds" x="1563.0" y="712.0"/><use href="#ds" x="1575.0" y="715.7"/><use href="#ds" x="1585.9" y="717.3"/><use href="#ds" x="1597.6" y="715.8"/><use href="#ds" x="1609.2" y="711.5"/><use href="#ds" x="1621.3" y="704.6"/><use href="#ds" x="1632.0" y="696.3"/><use href="#ds" x="1640.9" y="687.8"/><use href="#ds" x="1650.6" y="678.1"/><use href="#ds" x="1660.3" y="668.3"/><use href="#ds" x="1669.0" y="658.6"/><use href="#ds" x="1676.6" y="648.6"/><use href="#ds" x="1683.6" y="638.2"/><use href="#ds" x="1689.7" y="627.6"/><use href="#ds" x="1695.1" y="616.1"/><use href="#ds" x="1699.4" y="604.8"/><use href="#ds" x="1703.6" y="591.5"/><use href="#ds" x="1706.7" y="578.3"/><use href="#ds" x="1708.7" y="567.0"/><use href="#ds" x="1710.3" y="553.2"/><use href="#ds" x="1711.0" y="542.1"/><use href="#ds" x="1710.6" y="530.6"/><use href="#ds" x="1708.8" y="516.9"/><use href="#ds" x="1706.6" y="505.1"/><use href="#ds" x="1703.7" y="491.7"/><use href="#ds" x="1700.6" y="479.7"/><use href="#ds" x="1696.7" y="467.6"/><use href="#ds" x="1692.2" y="455.4"/><use href="#ds" x="1687.4" y="444.2"/><use href="#ds" x="1681.7" y="433.8"/><use href="#ds" x="1675.2" y="424.3"/><use href="#ds" x="1667.4" y="414.3"/><use href="#ds" x="1659.1" y="404.5"/><use href="#ds" x="1650.0" y="394.6"/><use href="#ds" x="1640.4" y="385.8"/><use href="#ds" x="1631.0" y="378.5"/><use href="#ds" x="1620.3" y="371.4"/><use href="#ds" x="1608.5" y="364.3"/><use href="#ds" x="1596.9" y="358.2"/><use href="#ds" x="1586.5" y="353.3"/><use href="#ds" x="1574.4" y="348.6"/><use href="#ds" x="1562.8" y="344.8"/><use href="#ds" x="1550.5" y="341.9"/><use href="#ds" x="1538.4" y="340.2"/><use href="#ds" x="1525.3" y="339.7"/><use href="#ds" x="1511.7" y="340.0"/><use href="#ds" x="1499.8" y="341.0"/><use href="#ds" x="1486.9" y="343.0"/><use href="#ds" x="1473.8" y="345.7"/><use href="#ds" x="1461.7" y="349.0"/><use href="#ds" x="1448.6" y="353.5"/><use href="#ds" x="1438.1" y="357.8"/><use href="#ds" x="1426.9" y="362.9"/><use href="#ds" x="1416.9" y="368.2"/><use href="#ds" x="1406.9" y="374.5"/><use href="#ds" x="1397.7" y="380.8"/><use href="#ds" x="1387.5" y="389.3"/><use href="#ds" x="1379.6" y="398.4"/><use href="#ds" x="1372.2" y="409.0"/><use href="#ds" x="1366.5" y="420.6"/><use href="#ds" x="1362.7" y="431.5"/><use href="#ds" x="1358.2" y="444.1"/><use href="#ds" x="1353.8" y="457.0"/><use href="#ds" x="1350.6" y="469.1"/><use href="#ds" x="1347.0" y="481.7"/><use href="#ds" x="1340.9" y="492.9"/><use href="#ds" x="1331.1" y="502.3"/><use href="#ds" x="1319.3" y="509.4"/><use href="#ds" x="1307.8" y="513.3"/><use href="#ds" x="1296.7" y="515.0"/><use href="#ds" x="1282.9" y="515.6"/><use href="#ds" x="1269.1" y="515.0"/><use href="#ds" x="1256.7" y="513.1"/><use href="#ds" x="1244.4" y="510.0"/><use href="#ds" x="1232.0" y="504.7"/><use href="#ds" x="1221.4" y="497.9"/><use href="#ds" x="1211.0" y="489.1"/><use href="#ds" x="1201.9" y="480.8"/><use href="#ds" x="1193.2" y="472.5"/><use href="#ds" x="1180.9" y="467.1"/><use href="#ds" x="1171.7" y="458.0"/><use href="#ds" x="1166.8" y="448.0"/><use href="#ds" x="1162.2" y="435.3"/><use href="#ds" x="1156.3" y="425.1"/><use href="#ds" x="1145.0" y="417.5"/><use href="#ds" x="1132.4" y="415.5"/><use href="#ds" x="1121.4" y="416.5"/><use href="#ds" x="1109.7" y="419.6"/><use href="#ds" x="1097.2" y="424.1"/><use href="#ds" x="1085.0" y="430.6"/><use href="#ds" x="1074.0" y="438.2"/><use href="#ds" x="1063.8" y="446.5"/><use href="#ds" x="1054.8" y="454.8"/><use href="#ds" x="1047.0" y="463.3"/><use href="#ds" x="1038.9" y="473.9"/><use href="#ds" x="1031.5" y="485.1"/><use href="#ds" x="1024.4" y="497.0"/><use href="#ds" x="1018.0" y="509.0"/><use href="#ds" x="1012.4" y="521.7"/><use href="#ds" x="1008.3" y="532.2"/><use href="#ds" x="1003.8" y="545.3"/><use href="#ds" x="1000.1" y="558.2"/><use href="#ds" x="997.7" y="569.5"/><use href="#ds" x="995.2" y="581.3"/><use href="#ds" x="992.6" y="593.3"/><use href="#ds" x="989.6" y="606.4"/><use href="#ds" x="987.0" y="617.9"/><use href="#ds" x="983.9" y="631.3"/><use href="#ds" x="980.8" y="644.2"/><use href="#ds" x="978.2" y="655.7"/><use href="#ds" x="975.9" y="669.4"/><use href="#ds" x="974.8" y="682.9"/></g>
<g><use href="#de" x="965.8" y="689.0"/><use href="#de" x="965.9" y="680.3"/><use href="#de" x="966.7" y="671.1"/><use href="#de" x="967.8" y="662.2"/><use href="#de" x="969.5" y="653.0"/><use href="#de" x="971.7" y="643.8"/><use href="#de" x="973.7" y="635.7"/><use href="#de" x="975.5" y="627.6"/><use href="#de" x="977.7" y="618.0"/><use href="#de" x="979.7" y="609.5"/><use href="#de" x="981.6" y="601.1"/><use href="#de" x="983.8" y="591.1"/><use href="#de" x="985.8" y="582.2"/><use href="#de" x="987.8" y="572.5"/><use href="#de" x="989.7" y="563.6"/><use href="#de" x="991.9" y="554.4"/><use href="#de" x="994.1" y="546.2"/><use href="#de" x="997.0" y="537.1"/><use href="#de" x="1000.4" y="527.8"/><use href="#de" x="1003.7" y="519.2"/><use href="#de" x="1007.5" y="510.3"/><use href="#de" x="1011.6" y="501.7"/><use href="#de" x="1015.5" y="494.3"/><use href="#de" x="1020.4" y="485.9"/><use href="#de" x="1025.4" y="477.9"/><use href="#de" x="1030.2" y="470.6"/><use href="#de" x="1035.0" y="463.9"/><use href="#de" x="1041.3" y="456.2"/><use href="#de" x="1047.5" y="449.4"/><use href="#de" x="1054.4" y="442.8"/><use href="#de" x="1061.9" y="436.2"/><use href="#de" x="1069.5" y="430.3"/><use href="#de" x="1077.8" y="424.6"/><use href="#de" x="1085.4" y="419.9"/><use href="#de" x="1094.2" y="415.6"/><use href="#de" x="1102.7" y="412.3"/><use href="#de" x="1112.4" y="409.4"/><use href="#de" x="1122.1" y="407.3"/><use href="#de" x="1130.4" y="406.5"/><use href="#de" x="1138.9" y="406.9"/><use href="#de" x="1147.3" y="408.7"/><use href="#de" x="1156.3" y="413.2"/><use href="#de" x="1163.2" y="419.2"/><use href="#de" x="1168.2" y="427.1"/><use href="#de" x="1171.9" y="435.1"/><use href="#de" x="1174.9" y="443.9"/><use href="#de" x="1178.6" y="452.0"/><use href="#de" x="1184.2" y="458.7"/><use href="#de" x="1193.2" y="461.3"/><use href="#de" x="1200.5" y="467.0"/><use href="#de" x="1207.8" y="474.0"/><use href="#de" x="1214.8" y="480.4"/><use href="#de" x="1222.3" y="487.1"/><use href="#de" x="1230.2" y="493.1"/><use href="#de" x="1239.0" y="498.2"/><use href="#de" x="1247.9" y="501.7"/><use href="#de" x="1256.2" y="503.9"/><use href="#de" x="1265.9" y="505.6"/><use href="#de" x="1276.0" y="506.4"/><use href="#de" x="1286.0" y="506.6"/><use href="#de" x="1295.3" y="506.1"/><use href="#de" x="1304.9" y="504.7"/><use href="#de" x="1313.1" y="502.3"/><use href="#de" x="1321.9" y="497.8"/><use href="#de" x="1329.3" y="492.1"/><use href="#de" x="1335.0" y="485.5"/><use href="#de" x="1338.7" y="478.1"/><use href="#de" x="1341.4" y="468.6"/><use href="#de" x="1343.9" y="458.7"/><use href="#de" x="1346.4" y="450.7"/><use href="#de" x="1349.6" y="441.4"/><use href="#de" x="1352.6" y="432.9"/><use href="#de" x="1355.4" y="424.9"/><use href="#de" x="1358.3" y="416.6"/><use href="#de" x="1362.4" y="407.8"/><use href="#de" x="1367.8" y="399.4"/><use href="#de" x="1372.7" y="392.7"/><use href="#de" x="1378.7" y="385.5"/><use href="#de" x="1384.6" y="379.6"/><use href="#de" x="1392.2" y="373.7"/><use href="#de" x="1399.5" y="368.7"/><use href="#de" x="1407.8" y="363.2"/><use href="#de" x="1416.6" y="358.1"/><use href="#de" x="1424.8" y="354.0"/><use href="#de" x="1434.1" y="349.7"/><use href="#de" x="1442.2" y="346.3"/><use href="#de" x="1450.0" y="343.4"/><use href="#de" x="1458.9" y="340.4"/><use href="#de" x="1466.9" y="338.2"/><use href="#de" x="1475.2" y="336.1"/><use href="#de" x="1484.1" y="334.3"/><use href="#de" x="1493.4" y="332.8"/><use href="#de" x="1501.8" y="331.7"/><use href="#de" x="1510.1" y="331.1"/><use href="#de" x="1520.0" y="330.7"/><use href="#de" x="1528.8" y="330.7"/><use href="#de" x="1538.9" y="331.3"/><use href="#de" x="1548.8" y="332.5"/><use href="#de" x="1557.6" y="334.2"/><use href="#de" x="1566.4" y="336.5"/><use href="#de" x="1575.2" y="339.3"/><use href="#de" x="1584.1" y="342.6"/><use href="#de" x="1592.8" y="346.2"/><use href="#de" x="1601.2" y="350.3"/><use href="#de" x="1609.6" y="354.7"/><use href="#de" x="1618.3" y="359.7"/><use href="#de" x="1626.2" y="364.5"/><use href="#de" x="1633.7" y="369.5"/><use href="#de" x="1641.5" y="375.1"/><use href="#de" x="1648.2" y="380.6"/><use href="#de" x="1654.7" y="386.6"/><use href="#de" x="1661.7" y="393.9"/><use href="#de" x="1667.8" y="400.9"/><use href="#de" x="1673.8" y="408.0"/><use href="#de" x="1679.0" y="414.4"/><use href="#de" x="1684.4" y="421.6"/><use href="#de" x="1689.5" y="429.4"/><use href="#de" x="1693.6" y="436.6"/><use href="#de" x="1697.6" y="445.1"/><use href="#de" x="1701.2" y="453.9"/><use href="#de" x="1704.1" y="461.7"/><use href="#de" x="1707.2" y="470.6"/><use href="#de" x="1709.8" y="479.3"/><use href="#de" x="1712.2" y="488.6"/><use href="#de" x="1714.2" y="497.3"/><use href="#de" x="1716.1" y="506.7"/><use href="#de" x="1717.8" y="516.2"/><use href="#de" x="1719.1" y="524.4"/><use href="#de" x="1719.8" y="532.7"/><use href="#de" x="1720.0" y="542.2"/><use href="#de" x="1719.4" y="552.3"/><use href="#de" x="1718.5" y="561.0"/><use href="#de" x="1717.3" y="570.0"/><use href="#de" x="1715.7" y="579.2"/><use href="#de" x="1713.8" y="587.9"/><use href="#de" x="1711.5" y="596.5"/><use href="#de" x="1708.9" y="604.9"/><use href="#de" x="1705.9" y="613.3"/><use href="#de" x="1702.3" y="622.0"/><use href="#de" x="1698.6" y="630.0"/><use href="#de" x="1694.3" y="637.9"/><use href="#de" x="1689.2" y="646.2"/><use href="#de" x="1684.6" y="653.0"/><use href="#de" x="1679.0" y="660.5"/><use href="#de" x="1672.9" y="668.0"/><use href="#de" x="1666.9" y="674.5"/><use href="#de" x="1660.9" y="680.6"/><use href="#de" x="1653.9" y="687.6"/><use href="#de" x="1647.8" y="693.7"/><use href="#de" x="1641.6" y="699.7"/><use href="#de" x="1634.8" y="705.7"/><use href="#de" x="1627.2" y="711.5"/><use href="#de" x="1620.1" y="716.0"/><use href="#de" x="1612.2" y="720.0"/><use href="#de" x="1604.0" y="723.2"/><use href="#de" x="1594.4" y="725.6"/><use href="#de" x="1585.4" y="726.3"/><use href="#de" x="1575.6" y="725.1"/><use href="#de" x="1567.3" y="723.1"/><use href="#de" x="1558.9" y="720.1"/><use href="#de" x="1550.2" y="716.3"/><use href="#de" x="1540.8" y="712.9"/><use href="#de" x="1532.2" y="710.1"/><use href="#de" x="1523.8" y="708.0"/><use href="#de" x="1515.5" y="706.4"/><use href="#de" x="1506.3" y="705.8"/><use href="#de" x="1497.8" y="707.0"/><use href="#de" x="1488.6" y="710.4"/><use href="#de" x="1479.6" y="714.5"/><use href="#de" x="1472.1" y="718.6"/><use href="#de" x="1464.5" y="723.0"/><use href="#de" x="1456.2" y="728.1"/><use href="#de" x="1448.5" y="733.7"/><use href="#de" x="1441.0" y="740.0"/><use href="#de" x="1434.4" y="746.0"/><use href="#de" x="1428.3" y="751.8"/><use href="#de" x="1422.2" y="758.1"/><use href="#de" x="1415.2" y="765.0"/><use href="#de" x="1409.0" y="771.2"/><use href="#de" x="1402.6" y="777.4"/><use href="#de" x="1396.1" y="783.6"/><use href="#de" x="1389.6" y="789.9"/><use href="#de" x="1383.0" y="796.0"/><use href="#de" x="1375.9" y="803.1"/><use href="#de" x="1370.9" y="810.0"/><use href="#de" x="1366.8" y="817.1"/><use href="#de" x="1361.2" y="825.5"/><use href="#de" x="1347.2" y="837.9"/><use href="#de" x="1328.5" y="843.3"/><use href="#de" x="1311.5" y="845.6"/><use href="#de" x="1292.2" y="846.7"/><use href="#de" x="1273.0" y="846.3"/><use href="#de" x="1256.7" y="844.9"/><use href="#de" x="1238.3" y="842.7"/><use href="#de" x="1219.7" y="840.1"/><use href="#de" x="1201.7" y="837.4"/><use href="#de" x="1184.4" y="834.6"/><use href="#de" x="1168.0" y="831.6"/><use href="#de" x="1151.5" y="828.2"/><use href="#de" x="1135.5" y="824.6"/><use href="#de" x="1120.2" y="820.7"/><use href="#de" x="1103.0" y="815.9"/><use href="#de" x="1087.1" y="811.0"/><use href="#de" x="1069.4" y="804.8"/><use href="#de" x="1054.8" y="799.1"/><use href="#de" x="1037.2" y="791.5"/><use href="#de" x="1020.8" y="783.6"/><use href="#de" x="1004.6" y="773.3"/><use href="#de" x="991.0" y="759.9"/><use href="#de" x="981.1" y="743.7"/><use href="#de" x="977.3" y="735.2"/><use href="#de" x="974.1" y="727.6"/><use href="#de" x="971.0" y="718.4"/><use href="#de" x="968.8" y="710.2"/><use href="#de" x="967.0" y="701.5"/><use href="#de" x="966.0" y="692.1"/></g>
<g opacity="0.9"><circle cx="1339.8" cy="480.5" r="3.1" fill="#35d8e0"/><use href="#de" x="1339.8" y="480.5"/><circle cx="1340.5" cy="490.1" r="3.1" fill="#35d8e0"/><use href="#de" x="1340.5" y="490.1"/><circle cx="1341.5" cy="501.5" r="3.1" fill="#35d8e0"/><use href="#de" x="1341.5" y="501.5"/><circle cx="1342.6" cy="512.3" r="3.1" fill="#35d8e0"/><use href="#de" x="1342.6" y="512.3"/><circle cx="1344.0" cy="521.7" r="3.1" fill="#35d8e0"/><use href="#de" x="1344.0" y="521.7"/><circle cx="1345.7" cy="531.8" r="3.1" fill="#35d8e0"/><use href="#de" x="1345.7" y="531.8"/><circle cx="1347.7" cy="542.0" r="3.1" fill="#35d8e0"/><use href="#de" x="1347.7" y="542.0"/><circle cx="1350.1" cy="552.6" r="3.1" fill="#35d8e0"/><use href="#de" x="1350.1" y="552.6"/><circle cx="1353.2" cy="563.6" r="3.1" fill="#35d8e0"/><use href="#de" x="1353.2" y="563.6"/><circle cx="1356.9" cy="573.5" r="3.1" fill="#35d8e0"/><use href="#de" x="1356.9" y="573.5"/><circle cx="1361.0" cy="582.7" r="3.1" fill="#35d8e0"/><use href="#de" x="1361.0" y="582.7"/><circle cx="1365.7" cy="591.4" r="3.1" fill="#35d8e0"/><use href="#de" x="1365.7" y="591.4"/><circle cx="1371.3" cy="600.2" r="3.1" fill="#35d8e0"/><use href="#de" x="1371.3" y="600.2"/><circle cx="1378.1" cy="609.1" r="3.1" fill="#35d8e0"/><use href="#de" x="1378.1" y="609.1"/><circle cx="1385.2" cy="616.9" r="3.1" fill="#35d8e0"/><use href="#de" x="1385.2" y="616.9"/><circle cx="1392.5" cy="624.2" r="3.1" fill="#35d8e0"/><use href="#de" x="1392.5" y="624.2"/><circle cx="1400.1" cy="631.0" r="3.1" fill="#35d8e0"/><use href="#de" x="1400.1" y="631.0"/><circle cx="1408.8" cy="638.0" r="3.1" fill="#35d8e0"/><use href="#de" x="1408.8" y="638.0"/><circle cx="1417.3" cy="644.2" r="3.1" fill="#35d8e0"/><use href="#de" x="1417.3" y="644.2"/><circle cx="1425.8" cy="650.1" r="3.1" fill="#35d8e0"/><use href="#de" x="1425.8" y="650.1"/><circle cx="1434.2" cy="656.1" r="3.1" fill="#35d8e0"/><use href="#de" x="1434.2" y="656.1"/><circle cx="1443.1" cy="662.8" r="3.1" fill="#35d8e0"/><use href="#de" x="1443.1" y="662.8"/><circle cx="1451.4" cy="669.3" r="3.1" fill="#35d8e0"/><use href="#de" x="1451.4" y="669.3"/><circle cx="1459.6" cy="675.7" r="3.1" fill="#35d8e0"/><use href="#de" x="1459.6" y="675.7"/><circle cx="1467.7" cy="681.8" r="3.1" fill="#35d8e0"/><use href="#de" x="1467.7" y="681.8"/><circle cx="1476.3" cy="687.7" r="3.1" fill="#35d8e0"/><use href="#de" x="1476.3" y="687.7"/><circle cx="1485.7" cy="693.4" r="3.1" fill="#35d8e0"/><use href="#de" x="1485.7" y="693.4"/><circle cx="1495.1" cy="698.8" r="3.1" fill="#35d8e0"/><use href="#de" x="1495.1" y="698.8"/></g>
<g opacity="0.9"><circle cx="1175.3" cy="452.5" r="3.1" fill="#2fb4e6"/><use href="#de" x="1175.3" y="452.5"/><circle cx="1174.6" cy="464.4" r="3.1" fill="#2fb4e6"/><use href="#de" x="1174.6" y="464.4"/><circle cx="1173.0" cy="476.1" r="3.1" fill="#2fb4e6"/><use href="#de" x="1173.0" y="476.1"/><circle cx="1170.2" cy="486.5" r="3.1" fill="#2fb4e6"/><use href="#de" x="1170.2" y="486.5"/><circle cx="1166.5" cy="496.6" r="3.1" fill="#2fb4e6"/><use href="#de" x="1166.5" y="496.6"/><circle cx="1161.4" cy="506.2" r="3.1" fill="#2fb4e6"/><use href="#de" x="1161.4" y="506.2"/><circle cx="1155.6" cy="514.9" r="3.1" fill="#2fb4e6"/><use href="#de" x="1155.6" y="514.9"/><circle cx="1149.2" cy="523.1" r="3.1" fill="#2fb4e6"/><use href="#de" x="1149.2" y="523.1"/><circle cx="1142.5" cy="530.6" r="3.1" fill="#2fb4e6"/><use href="#de" x="1142.5" y="530.6"/><circle cx="1135.4" cy="540.2" r="3.1" fill="#2fb4e6"/><use href="#de" x="1135.4" y="540.2"/><circle cx="1130.2" cy="549.8" r="3.1" fill="#2fb4e6"/><use href="#de" x="1130.2" y="549.8"/><circle cx="1126.8" cy="561.1" r="3.1" fill="#2fb4e6"/><use href="#de" x="1126.8" y="561.1"/><circle cx="1125.4" cy="571.3" r="3.1" fill="#2fb4e6"/><use href="#de" x="1125.4" y="571.3"/><circle cx="1126.7" cy="581.9" r="3.1" fill="#2fb4e6"/><use href="#de" x="1126.7" y="581.9"/><circle cx="1131.2" cy="592.4" r="3.1" fill="#2fb4e6"/><use href="#de" x="1131.2" y="592.4"/><circle cx="1137.3" cy="601.9" r="3.1" fill="#2fb4e6"/><use href="#de" x="1137.3" y="601.9"/><circle cx="1145.0" cy="610.4" r="3.1" fill="#2fb4e6"/><use href="#de" x="1145.0" y="610.4"/><circle cx="1152.7" cy="617.0" r="3.1" fill="#2fb4e6"/><use href="#de" x="1152.7" y="617.0"/></g>
</g>
<rect x="1807" y="306" width="41.5" height="583.5" fill="url(#cbar)"/>
<text x="1851" y="316" font-family="Liberation Sans" font-weight="bold" font-style="italic" font-size="47" fill="#000" opacity="0.6" transform="translate(2,2)">4.0</text>
<text x="1851" y="316" font-family="Liberation Sans" font-weight="bold" font-style="italic" font-size="47" fill="#fff">4.0</text>
<text x="1851" y="462" font-family="Liberation Sans" font-weight="bold" font-style="italic" font-size="47" fill="#000" opacity="0.6" transform="translate(2,2)">3.0</text>
<text x="1851" y="462" font-family="Liberation Sans" font-weight="bold" font-style="italic" font-size="47" fill="#fff">3.0</text>
<text x="1851" y="608" font-family="Liberation Sans" font-weight="bold" font-style="italic" font-size="47" fill="#000" opacity="0.6" transform="translate(2,2)">2.0</text>
<text x="1851" y="608" font-family="Liberation Sans" font-weight="bold" font-style="italic" font-size="47" fill="#fff">2.0</text>
<text x="1851" y="754" font-family="Liberation Sans" font-weight="bold" font-style="italic" font-size="47" fill="#000" opacity="0.6" transform="translate(2,2)">1.0</text>
<text x="1851" y="754" font-family="Liberation Sans" font-weight="bold" font-style="italic" font-size="47" fill="#fff">1.0</text>
<text x="1851" y="900.5" font-family="Liberation Sans" font-weight="bold" font-style="italic" font-size="47" fill="#000" opacity="0.6" transform="translate(2,2)">0.0</text>
<text x="1851" y="900.5" font-family="Liberation Sans" font-weight="bold" font-style="italic" font-size="47" fill="#fff">0.0</text>
<polygon points="1861,145.7 1877.3,151.3 1863.5,235.3 1836.9,264.7" fill="#4d4d4d"/>
<polygon points="1750.1,126.3 1861,145.7 1836.9,264.7 1733.5,234.7" fill="#f0f0f0"/>
<g transform="matrix(0.985,0.17,-0.152,0.988,1773.9,151.1)"><path d="M0,78.2 L0,0 L31,0 A20.5,20.4 0 0 1 31,40.8 L0,40.8" fill="none" stroke="#00ff00" stroke-width="10.2" stroke-linejoin="miter"/></g>
<g transform="translate(1725,115) scale(0.12531)" fill="none" stroke="#0000ff" stroke-linejoin="round">
<path d="M1090,388 L967,1022" stroke-width="20"/>
<path d="M1084,400 L1158,406" stroke-width="40"/>
<path d="M1150,410 L1126,590 L1088,652 L1046,664" stroke-width="17"/>
<path d="M1040,668 L1062,670 L1080,790 L1060,930" stroke-width="19" stroke-linecap="round"/>
<path d="M1040,664 L1085,666" stroke-width="26"/>
</g>
</svg>
<svg class="abs" style="left:84px;top:100px" width="90" height="600" viewBox="84 100 90 600">
<defs>
<filter id="ib1" x="-30%" y="-100%" width="160%" height="300%"><feGaussianBlur stdDeviation="9"/></filter>
<filter id="ib2" x="-30%" y="-30%" width="160%" height="160%"><feGaussianBlur stdDeviation="22"/></filter>
<filter id="ib3" x="-30%" y="-30%" width="160%" height="160%"><feGaussianBlur stdDeviation="5"/></filter>
<linearGradient id="cyl" x1="62" x2="810" y1="0" y2="0" gradientUnits="userSpaceOnUse"><stop offset="0" stop-color="#858889"/><stop offset="0.1" stop-color="#a9abab"/><stop offset="0.26" stop-color="#f7f7f7"/><stop offset="0.44" stop-color="#cbcfd1"/><stop offset="0.62" stop-color="#8d9597"/><stop offset="0.74" stop-color="#a9aeb0"/><stop offset="0.9" stop-color="#b3b7b9"/><stop offset="1" stop-color="#7a7e80"/></linearGradient>
<linearGradient id="cyt" x1="62" x2="810" y1="0" y2="0" gradientUnits="userSpaceOnUse"><stop offset="0" stop-color="#bfc1c1"/><stop offset="0.3" stop-color="#d9dada"/><stop offset="0.47" stop-color="#e9eaea"/><stop offset="0.56" stop-color="#a9b1b4"/><stop offset="0.8" stop-color="#babfc1"/><stop offset="1" stop-color="#c6c8c9"/></linearGradient>
<linearGradient id="wbl" x1="0" y1="0" x2="1" y2="1"><stop offset="0" stop-color="#3d7fe8"/><stop offset="0.5" stop-color="#1a56c8"/><stop offset="1" stop-color="#0b3ca0"/></linearGradient>
<linearGradient id="wsv" x1="0" y1="0" x2="1" y2="0.6"><stop offset="0" stop-color="#fdfdfd"/><stop offset="0.5" stop-color="#d8d8d8"/><stop offset="1" stop-color="#a9a9a9"/></linearGradient>
<linearGradient id="rdh" x1="0" y1="1" x2="1" y2="0"><stop offset="0" stop-color="#8e1512"/><stop offset="0.45" stop-color="#c8241f"/><stop offset="0.62" stop-color="#e7605a"/><stop offset="0.75" stop-color="#c8241f"/><stop offset="1" stop-color="#a81a16"/></linearGradient>
<radialGradient id="ggr" cx="0.4" cy="0.35" r="0.8"><stop offset="0" stop-color="#e9e9e6"/><stop offset="0.55" stop-color="#c6c8c3"/><stop offset="1" stop-color="#a3a6a1"/></radialGradient>
<linearGradient id="pgr" x1="0.2" y1="1" x2="0.9" y2="0"><stop offset="0" stop-color="#8fcb33"/><stop offset="0.55" stop-color="#a6d551"/><stop offset="1" stop-color="#e9f5c8"/></linearGradient>
<linearGradient id="por" x1="0.3" y1="0" x2="0.7" y2="1"><stop offset="0" stop-color="#f7d044"/><stop offset="1" stop-color="#f8b02c"/></linearGradient>
<linearGradient id="pbl" x1="0.2" y1="0" x2="0.6" y2="1"><stop offset="0" stop-color="#bfe3f8"/><stop offset="1" stop-color="#58aee6"/></linearGradient>
<linearGradient id="pbs" x1="0" y1="0" x2="1" y2="0"><stop offset="0" stop-color="#56b2f0"/><stop offset="1" stop-color="#1668c4"/></linearGradient>
<linearGradient id="prd" x1="0.8" y1="0" x2="0.3" y2="1"><stop offset="0" stop-color="#ee4f22"/><stop offset="1" stop-color="#c43a1c"/></linearGradient>
<linearGradient id="prs" x1="0" y1="0" x2="1" y2="0"><stop offset="0" stop-color="#f0602e"/><stop offset="0.6" stop-color="#fdb890"/><stop offset="1" stop-color="#f2683a"/></linearGradient>
</defs>
<g fill="#a9a9a9"><circle cx="96.5" cy="113.2" r="1.45"/><circle cx="105.7" cy="113.2" r="1.45"/><circle cx="114.8" cy="113.2" r="1.45"/><circle cx="123.9" cy="113.2" r="1.45"/><circle cx="133.0" cy="113.2" r="1.45"/><circle cx="142.0" cy="113.2" r="1.45"/><circle cx="151.2" cy="113.2" r="1.45"/><circle cx="160.3" cy="113.2" r="1.45"/></g>
<g transform="translate(84,100) scale(0.10177)">
<path d="M62,770 L62,900 A374,82 0 0 0 810,900 L810,770Z" fill="url(#cyl)"/>
<path d="M62,722 A374,78 0 0 0 810,722" fill="none" stroke="#2c3032" stroke-width="26" opacity="0.8" filter="url(#ib3)"/>
<path d="M62,545 L62,705 A374,78 0 0 0 810,705 L810,545Z" fill="url(#cyl)"/>
<path d="M62,700 A374,78 0 0 0 810,700" fill="none" stroke="#2a78b4" stroke-width="21"/>
<path d="M62,502 A374,78 0 0 0 810,502" fill="none" stroke="#2c3032" stroke-width="26" opacity="0.8" filter="url(#ib3)"/>
<path d="M62,320 L62,485 A374,78 0 0 0 810,485 L810,320Z" fill="url(#cyl)"/>
<path d="M62,480 A374,78 0 0 0 810,480" fill="none" stroke="#2a78b4" stroke-width="21"/>
<ellipse cx="436" cy="320" rx="374" ry="93" fill="url(#cyt)"/>
<path d="M436,320 L300,232 L470,228Z" fill="#fff" opacity="0.75" filter="url(#ib3)"/>
<path d="M436,320 L810,330 L760,270Z" fill="#9aa4a8" opacity="0.55" filter="url(#ib3)"/>
<path d="M436,320 L150,395 L300,410Z" fill="#fff" opacity="0.5" filter="url(#ib3)"/>
<ellipse cx="436" cy="320" rx="368" ry="88" fill="none" stroke="#f3f3f3" stroke-width="7" opacity="0.45"/>
</g>
<g transform="translate(84,226) scale(0.09398)">
<ellipse cx="480" cy="893" rx="380" ry="13" fill="#3a3a3a" opacity="0.8" filter="url(#ib1)"/>
<path d="M165,830 L548,398" stroke="#1147b4" stroke-width="132" stroke-linecap="round" fill="none"/>
<path d="M165,830 L548,398" stroke="url(#wbl)" stroke-width="112" stroke-linecap="round" fill="none"/>
<path d="M232,760 L500,452" stroke="#0b389c" stroke-width="54" stroke-linecap="round" fill="none"/>
<path d="M250,755 L505,462" stroke="#1a52c4" stroke-width="26" stroke-linecap="round" fill="none"/>
<path d="M150,740 L470,385" stroke="#5a98f4" stroke-width="12" stroke-linecap="round" fill="none" opacity="0.75"/>
<circle cx="166" cy="830" r="32" fill="#0b389c"/><circle cx="170" cy="834" r="22" fill="#f0f6ff"/><circle cx="176" cy="842" r="12" fill="#7fb4ff" opacity="0.7"/>
<path d="M500,392 L546,270 L585,185 L645,128 L720,106 L772,124 L716,162 L690,215 L700,265 L745,292 L800,212 L817,196 L806,272 L765,350 L700,392 L640,430 L592,462Z" fill="url(#wsv)" stroke="#8f8f8f" stroke-width="7" stroke-linejoin="round"/>
<path d="M560,300 L600,200 L655,145 L720,120 L700,150 L660,200 L640,270 L600,350Z" fill="#fff" opacity="0.85" filter="url(#ib3)"/>
<path d="M700,265 L745,292 L800,212 L817,196 L780,196 L730,225Z" fill="#b4b4b4"/>
<path d="M716,162 L690,215 L700,265 L745,292" fill="none" stroke="#7a7a7a" stroke-width="8" opacity="0.7"/>
<rect x="594" y="290" width="86" height="78" rx="8" fill="#3a3a3a" transform="rotate(-22 637 329)"/>
<g transform="rotate(-22 637 329)" fill="#e8e8e8"><rect x="606" y="302" width="16" height="14"/><rect x="634" y="300" width="10" height="22"/><rect x="652" y="306" width="14" height="12"/><rect x="610" y="330" width="12" height="22"/><rect x="632" y="336" width="20" height="10"/><rect x="656" y="330" width="10" height="24"/></g>
<path d="M178,212 L452,482" stroke="#6e6e6e" stroke-width="31" fill="none"/>
<path d="M173,217 L447,487" stroke="#f6f6f6" stroke-width="12" fill="none"/>
<path d="M78,146 L112,102 L192,160 L190,206 L162,226Z" fill="#f7f7f7" stroke="#b0b0b0" stroke-width="6" stroke-linejoin="round"/>
<linearGradient id="rdh2" gradientUnits="userSpaceOnUse" x1="383" y1="527" x2="497" y2="413"><stop offset="0" stop-color="#7a0f0d"/><stop offset="0.25" stop-color="#b81d19"/><stop offset="0.55" stop-color="#cf2a25"/><stop offset="0.72" stop-color="#e46a64"/><stop offset="0.85" stop-color="#c4221e"/><stop offset="1" stop-color="#9a1613"/></linearGradient>
<path d="M406.1,436.1C415.5,426.6 426.8,416.3 437.2,410.6C447.5,404.9 458.9,401.2 468.3,402.1C477.7,403.1 478.3,402.7 493.7,416.3C509.2,429.8 549.6,468.4 560.9,483.4C572.2,498.5 557.5,497.9 561.6,506.8C565.7,515.6 571.8,524.9 585.7,536.5C599.6,548.0 620.8,557.9 645.1,576.1C669.3,594.2 705.9,621.3 731.3,645.4C756.8,669.4 779.9,698.2 797.8,720.3C815.7,742.5 830.4,761.9 838.8,778.3C847.2,794.7 849.6,805.2 848.0,818.6C846.3,832.0 838.8,849.0 828.9,858.9C819.0,868.8 802.0,876.3 788.6,878.0C775.2,879.6 764.7,877.2 748.3,868.8C731.9,860.4 712.5,845.7 690.3,827.8C668.2,809.9 639.4,786.8 615.4,761.3C591.3,735.9 564.2,699.3 546.1,675.1C527.9,650.8 518.0,629.6 506.5,615.7C494.9,601.8 485.6,595.7 476.8,591.6C467.9,587.5 468.5,602.2 453.4,590.9C438.4,579.6 399.8,539.2 386.3,523.7C372.7,508.3 373.1,507.7 372.1,498.3C371.2,488.9 374.9,477.5 380.6,467.2C386.3,456.8 396.6,445.5 406.1,436.1Z" fill="#c4221e"/>
<clipPath id="rhc"><path d="M406.1,436.1C415.5,426.6 426.8,416.3 437.2,410.6C447.5,404.9 458.9,401.2 468.3,402.1C477.7,403.1 478.3,402.7 493.7,416.3C509.2,429.8 549.6,468.4 560.9,483.4C572.2,498.5 557.5,497.9 561.6,506.8C565.7,515.6 571.8,524.9 585.7,536.5C599.6,548.0 620.8,557.9 645.1,576.1C669.3,594.2 705.9,621.3 731.3,645.4C756.8,669.4 779.9,698.2 797.8,720.3C815.7,742.5 830.4,761.9 838.8,778.3C847.2,794.7 849.6,805.2 848.0,818.6C846.3,832.0 838.8,849.0 828.9,858.9C819.0,868.8 802.0,876.3 788.6,878.0C775.2,879.6 764.7,877.2 748.3,868.8C731.9,860.4 712.5,845.7 690.3,827.8C668.2,809.9 639.4,786.8 615.4,761.3C591.3,735.9 564.2,699.3 546.1,675.1C527.9,650.8 518.0,629.6 506.5,615.7C494.9,601.8 485.6,595.7 476.8,591.6C467.9,587.5 468.5,602.2 453.4,590.9C438.4,579.6 399.8,539.2 386.3,523.7C372.7,508.3 373.1,507.7 372.1,498.3C371.2,488.9 374.9,477.5 380.6,467.2C386.3,456.8 396.6,445.5 406.1,436.1Z"/></clipPath>
<g clip-path="url(#rhc)">
<path d="M400,430 L860,890" stroke="#7a0f0d" stroke-width="60" fill="none" transform="translate(-58,58)" opacity="0.75" filter="url(#ib3)"/>
<path d="M400,430 L860,890" stroke="#8a1411" stroke-width="30" fill="none" transform="translate(62,-62)" opacity="0.7" filter="url(#ib3)"/>
<path d="M560,560 L780,780" stroke="#8a1411" stroke-width="14" fill="none" transform="translate(-22,22)" opacity="0.8"/>
<path d="M560,560 L800,800" stroke="#8a1411" stroke-width="12" fill="none" transform="translate(8,-8)" opacity="0.55"/>
<path d="M540,500 L880,840" stroke="#fbd0cc" stroke-width="9" fill="none" opacity="0.9"/>
<path d="M400,580 L580,460" stroke="#f8c8c4" stroke-width="9" fill="none" opacity="0.9"/>
<path d="M730,900 L900,790" stroke="#f3b0ac" stroke-width="7" fill="none" opacity="0.7"/>
</g>
</g>
<g transform="translate(84,340) scale(0.09398)">
<ellipse cx="480" cy="815" rx="330" ry="60" fill="#5a5a5a" opacity="0.55" filter="url(#ib2)"/>
<path d="M558.0,321.0L603.5,334.9L585.7,404.4L539.1,394.8A158.0,158.0 0 0 1 511.0,432.4L533.3,474.4L471.6,511.0L445.5,471.3A158.0,158.0 0 0 1 399.0,478.0L385.1,523.5L315.6,505.7L325.2,459.1A158.0,158.0 0 0 1 287.6,431.0L245.6,453.3L209.0,391.6L248.7,365.5A158.0,158.0 0 0 1 242.0,319.0L196.5,305.1L214.3,235.6L260.9,245.2A158.0,158.0 0 0 1 289.0,207.6L266.7,165.6L328.4,129.0L354.5,168.7A158.0,158.0 0 0 1 401.0,162.0L414.9,116.5L484.4,134.3L474.8,180.9A158.0,158.0 0 0 1 512.4,209.0L554.4,186.7L591.0,248.4L551.3,274.5A158.0,158.0 0 0 1 558.0,321.0Z" fill="#dfe0dc" stroke="#3a4043" stroke-width="17" stroke-linejoin="round"/>
<circle cx="400" cy="320" r="126" fill="url(#ggr)" stroke="#f8f8f6" stroke-width="8"/>
<circle cx="400" cy="320" r="48" fill="#dededa" stroke="#42484b" stroke-width="17"/>
<path d="M456.8,698.1L499.5,702.7L493.9,758.7L451.1,754.7A118.0,118.0 0 0 1 434.5,785.7L461.5,819.1L417.9,854.7L390.5,821.7A118.0,118.0 0 0 1 356.9,831.8L352.3,874.5L296.3,868.9L300.3,826.1A118.0,118.0 0 0 1 269.3,809.5L235.9,836.5L200.3,792.9L233.3,765.5A118.0,118.0 0 0 1 223.2,731.9L180.5,727.3L186.1,671.3L228.9,675.3A118.0,118.0 0 0 1 245.5,644.3L218.5,610.9L262.1,575.3L289.5,608.3A118.0,118.0 0 0 1 323.1,598.2L327.7,555.5L383.7,561.1L379.7,603.9A118.0,118.0 0 0 1 410.7,620.5L444.1,593.5L479.7,637.1L446.7,664.5A118.0,118.0 0 0 1 456.8,698.1Z" fill="#dfe0dc" stroke="#3a4043" stroke-width="17" stroke-linejoin="round"/>
<circle cx="340" cy="715" r="90" fill="url(#ggr)" stroke="#f8f8f6" stroke-width="8"/>
<circle cx="340" cy="715" r="38" fill="#dededa" stroke="#42484b" stroke-width="17"/>
<path d="M782.0,628.1L820.2,653.0L784.9,714.6L744.1,694.2A158.0,158.0 0 0 1 707.0,723.0L716.4,767.6L647.9,786.2L633.5,743.0A158.0,158.0 0 0 1 586.9,737.0L562.0,775.2L500.4,739.9L520.8,699.1A158.0,158.0 0 0 1 492.0,662.0L447.4,671.4L428.8,602.9L472.0,588.5A158.0,158.0 0 0 1 478.0,541.9L439.8,517.0L475.1,455.4L515.9,475.8A158.0,158.0 0 0 1 553.0,447.0L543.6,402.4L612.1,383.8L626.5,427.0A158.0,158.0 0 0 1 673.1,433.0L698.0,394.8L759.6,430.1L739.2,470.9A158.0,158.0 0 0 1 768.0,508.0L812.6,498.6L831.2,567.1L788.0,581.5A158.0,158.0 0 0 1 782.0,628.1Z" fill="#dfe0dc" stroke="#3a4043" stroke-width="17" stroke-linejoin="round"/>
<circle cx="630" cy="585" r="126" fill="url(#ggr)" stroke="#f8f8f6" stroke-width="8"/>
<circle cx="630" cy="585" r="48" fill="#dededa" stroke="#42484b" stroke-width="17"/>
</g>
<rect x="88" y="458.2" width="82.5" height="106.7" rx="5.5" fill="#b9b9b9"/>
<g transform="translate(84,454) scale(0.09398)">
<path d="M92,420 C100,300 220,150 420,120 C520,108 610,135 668,180 L668,205 L205,672 C150,640 100,560 92,420Z" fill="#8cc63a"/>
<path d="M92,420 C100,300 220,150 420,120 C520,108 610,135 668,180 L195,572 C140,540 100,500 92,420Z" fill="url(#pgr)"/>
<path d="M195,572 L668,182 L668,205 L205,672Z" fill="#b9dc78"/>
<path d="M195,572 L668,182" stroke="#e6f4c0" stroke-width="8" fill="none"/>
<path d="M92,420 C100,500 140,545 195,572 L205,672 C140,630 98,540 92,420Z" fill="#86c232"/>
<path d="M500,372 L715,185 C790,225 850,320 860,430 C862,470 855,500 846,515 L820,605 L500,462Z" fill="#f6a62a"/>
<path d="M500,372 L715,185 C790,225 850,320 860,430 C862,470 855,500 846,515Z" fill="url(#por)"/>
<path d="M500,372 L846,515" stroke="#fbd46a" stroke-width="7" fill="none"/>
<path d="M846,515 L820,605 C840,560 858,480 860,430Z" fill="#ef8e1c"/>
<path d="M490,490 L802,640 L802,722 C760,800 670,850 572,872 L560,748Z" fill="url(#pbs)"/>
<path d="M490,490 L802,640 C760,690 670,730 560,748Z" fill="url(#pbl)"/>
<path d="M560,748 C670,730 760,690 802,640" stroke="#e4f4fd" stroke-width="12" fill="none" opacity="0.9"/>
<path d="M490,490 L560,748 L572,872 L548,760Z" fill="#3f96dc"/>
<path d="M455,520 L212,712 L205,738 C205,790 215,830 215,830 C300,890 440,915 540,900 L527,775Z" fill="url(#prs)"/>
<path d="M455,520 L212,712 C300,770 430,790 527,775Z" fill="url(#prd)"/>
<path d="M212,712 C300,770 430,790 527,775" stroke="#f89a70" stroke-width="10" fill="none"/>
<path d="M207,758 C300,815 430,832 532,818" stroke="#fdd0b8" stroke-width="7" fill="none" opacity="0.8"/>
<path d="M215,832 C300,892 440,916 540,900" stroke="#c23a20" stroke-width="6" fill="none" opacity="0.7"/>
</g>
<g transform="translate(84,566) scale(0.09398)" opacity="0.93">
<g fill="#8d8984"><circle cx="385" cy="218" r="103"/><circle cx="255" cy="285" r="89"/><circle cx="165" cy="400" r="83"/><circle cx="142" cy="530" r="79"/><circle cx="185" cy="650" r="89"/><circle cx="268" cy="735" r="83"/><circle cx="365" cy="812" r="113"/><rect x="340" y="126" width="131" height="780" rx="60"/></g>
<g fill="#f0d698"><circle cx="385" cy="218" r="81"/><circle cx="255" cy="285" r="67"/><circle cx="165" cy="400" r="61"/><circle cx="142" cy="530" r="57"/><circle cx="185" cy="650" r="67"/><circle cx="268" cy="735" r="61"/><circle cx="365" cy="812" r="91"/><rect x="200" y="240" width="250" height="560"/><rect x="350" y="148" width="100" height="745" rx="45"/></g>
<g fill="none" stroke="#8d8984" stroke-width="22" stroke-linecap="round"><path d="M298,232 C300,280 330,312 378,318"/><path d="M172,330 C250,270 280,300 290,330"/><path d="M165,330 C165,370 185,395 215,405"/><path d="M118,578 C140,560 170,550 205,548"/><path d="M200,690 C210,670 235,655 268,652"/><path d="M270,775 C285,735 320,710 362,705"/></g>
<g fill="#8a7a5e"><circle cx="395" cy="220" r="13"/><circle cx="420" cy="430" r="13"/><circle cx="170" cy="455" r="13"/><circle cx="330" cy="520" r="13"/><circle cx="185" cy="612" r="13"/><circle cx="405" cy="808" r="13"/></g>
<path d="M472,190 Q472,128 535,132 C720,160 868,320 868,520 C868,720 720,880 535,908 Q472,912 472,850Z" fill="#d9d9d9" stroke="#8d8984" stroke-width="22" stroke-linejoin="round"/>
<g fill="none" stroke="#ee9a9c" stroke-width="20"><circle cx="590" cy="270" r="28"/><circle cx="695" cy="362" r="28"/><circle cx="590" cy="770" r="28"/><path d="M590,345 L590,430 Q590,460 560,460 L512,460"/><path d="M695,405 L695,460 Q695,520 640,520 L512,520"/><path d="M512,580 L590,580 L590,700"/><path d="M695,588 L695,702"/><path d="M762,395 L762,600"/></g><circle cx="760" cy="640" r="12" fill="#ee9a9c"/>
</g>
</svg>
<div class="abs" style="left:84px;top:203.1px;width:90px;text-align:center;font-size:15px;line-height:20px;letter-spacing:0.34px;color:#1c1c1c;-webkit-text-stroke:0.25px #1c1c1c;">Data</div>
<div class="abs" style="left:84px;top:315.8px;width:90px;text-align:center;font-size:15px;line-height:20px;letter-spacing:0.44px;color:#1c1c1c;-webkit-text-stroke:0.25px #1c1c1c;">Groom</div>
<div class="abs" style="left:84px;top:430.0px;width:90px;text-align:center;font-size:15px;line-height:20px;letter-spacing:0.60px;color:#1c1c1c;-webkit-text-stroke:0.25px #1c1c1c;">Optimize</div>
<div class="abs" style="left:84px;top:543.6px;width:90px;text-align:center;font-size:15px;line-height:20px;letter-spacing:0.37px;color:#1c1c1c;-webkit-text-stroke:0.25px #1c1c1c;">Analyze</div>
<div class="abs" style="left:84px;top:656.9px;width:90px;text-align:center;font-size:15px;line-height:20px;letter-spacing:0.23px;color:#b5b5b5;-webkit-text-stroke:0.25px #b5b5b5;">DeepSSM</div>
<!-- dock header -->
<div class="abs" style="left:174px;top:100px;width:605px;height:32.8px;background:linear-gradient(180deg,#ececec 0%,#e5e5e5 50%,#d9d9d9 100%);border-top:1px solid #c8c8c8;border-bottom:1.5px solid #b2b2b2;border-right:1.2px solid #9e9e9e;box-sizing:border-box;"></div>
<div class="abs" style="left:174px;top:133px;width:605px;height:988px;border-right:1.2px solid #9e9e9e;box-sizing:border-box;"></div>
<div class="abs" style="left:174px;top:104px;width:656px;text-align:center;font-size:17.2px;line-height:24px;color:#1a1a1a;">Analysis</div>
<svg class="abs" style="left:176px;top:103px;filter:blur(0.35px)" width="52" height="24" viewBox="0 0 52 24">
  <circle cx="11.4" cy="11.8" r="10.3" fill="#484848"/>
  <path d="M7.7,8.1 L15.1,15.5 M15.1,8.1 L7.7,15.5" stroke="#f6f6f6" stroke-width="3.6" stroke-linecap="round"/>
  <circle cx="38.5" cy="11.8" r="10.3" fill="#484848"/>
  <rect x="36.2" y="7.2" width="7.6" height="6" rx="1.2" fill="none" stroke="#f4f4f4" stroke-width="1.7"/>
  <rect x="33.2" y="10.4" width="7.8" height="6.2" rx="1.2" fill="#484848" stroke="#f4f4f4" stroke-width="1.7"/>
</svg>
<!-- scrollbar -->
<div class="abs" style="left:755.5px;top:133px;width:22px;height:988px;background:linear-gradient(90deg,#f1f1f1 0%,#fbfbfb 30%,#fafafa 100%);border-left:1px solid #e2e2e2;box-sizing:border-box;"></div>
<div class="abs" style="left:760.5px;top:140.5px;width:12px;height:974px;border-radius:6px;background:#7f7f7f;"></div>
<!-- group boxes -->
<div class="gb2" style="top:138px;"><div class="gbh2 first"></div><svg class="tri" viewBox="0 0 24 24"><path d="M4.9,1.5 L19,11.9 L4.9,22.2Z" fill="#fff"/></svg><div class="gbt2" style="letter-spacing:-0.16px">Analysis</div></div>
<div class="gb2" style="top:180.4px;"><div class="gbh2"></div><svg class="tri" viewBox="0 0 24 24"><path d="M4.9,1.5 L19,11.9 L4.9,22.2Z" fill="#fff"/></svg><div class="gbt2" style="letter-spacing:0.42px">Metrics</div></div>
<div class="gb2" style="top:222.8px;"><div class="gbh2"></div><svg class="tri" viewBox="0 0 24 24"><path d="M4.9,1.5 L19,11.9 L4.9,22.2Z" fill="#fff"/></svg><div class="gbt2" style="letter-spacing:0.2px">Surface Reconstruction</div></div>
<div class="gb2" style="top:265.2px;"><div class="gbh2"></div><svg class="tri" viewBox="0 0 24 24"><path d="M4.9,1.5 L19,11.9 L4.9,22.2Z" fill="#fff"/></svg><div class="gbt2" style="letter-spacing:0.08px">Good/Bad Particles</div></div>
<div class="gb2" style="top:307.6px;"><div class="gbh2"></div><svg class="tri" viewBox="0 0 24 24"><path d="M4.9,1.5 L19,11.9 L4.9,22.2Z" fill="#fff"/></svg><div class="gbt2" style="letter-spacing:0.2px">Particle Area Analysis</div></div>
<div class="gb2" style="top:350px;height:765px;"><div class="gbh2" style="border-radius:5px 5px 3px 3px"></div><svg class="tri" viewBox="0 0 24 24"><path d="M1.6,5 L22.4,5 L12,18.8Z" fill="#fff"/></svg><div class="gbt2" style="letter-spacing:0.21px">Shape/Scalar Correlation</div></div>
<!-- form -->
<div class="lbl" style="left:201px;top:412.8px;letter-spacing:0.01px">Feature</div>
<div class="combo" style="left:436.5px;top:409.2px;width:285px;height:29.8px;line-height:31.4px;"><div class="ct" style="letter-spacing:0.18px">ShellThickness</div><div class="cbtn" style="left:258.4px;top:2.6px;width:24.8px;height:24.5px;"><svg width="24.8" height="24.5" viewBox="0 0 24 24"><path d="M7.6,9.6 L12,5.4 L16.4,9.6 M7.6,14.4 L12,18.6 L16.4,14.4" fill="none" stroke="#fff" stroke-width="2.2" stroke-linecap="round" stroke-linejoin="round"/></svg></div></div>
<div class="lbl" style="left:201px;top:464.5px;letter-spacing:0.36px">Number of components</div>
<div class="ledit" style="left:433.2px;top:461.3px;width:294.1px;height:28.9px;line-height:28px;">3</div>
<div class="lbl" style="left:201px;top:511.1px;letter-spacing:0.31px">Cross validation folds</div>
<div class="ledit" style="left:433.2px;top:507.6px;width:294.1px;height:29.5px;line-height:28.6px;">5</div>
<div class="abs" style="left:201.4px;top:555.1px;width:20.4px;height:20.4px;border-radius:50%;background:#fff;box-shadow:0 0.5px 1.8px rgba(0,0,0,0.4),0 0 0 0.5px rgba(0,0,0,0.1);"></div>
<div class="lbl" style="left:230px;top:554.5px;letter-spacing:0.32px">Determine number of components</div>
<div class="abs" style="left:201.2px;top:583.8px;width:20.8px;height:20.8px;border-radius:50%;background:linear-gradient(180deg,#3590fc,#1572f6);box-shadow:0 0.5px 1.5px rgba(0,40,140,0.4);"></div>
<div class="abs" style="left:207px;top:589.6px;width:9.2px;height:9.2px;border-radius:50%;background:#fff;"></div>
<div class="lbl" style="left:230px;top:583.3px;letter-spacing:0.18px">Plot Shape/Scalar fit</div>
<!-- run button -->
<div class="abs" style="left:201px;top:1061.3px;width:527px;height:32.3px;border:1.2px solid #4d4d4d;border-radius:6px;box-sizing:border-box;background:linear-gradient(180deg,#f0f0f0 0%,#e6e6e6 40%,#cfcfcf 75%,#c3c3c3 100%);text-align:center;font-size:20px;line-height:32.6px;letter-spacing:-0.5px;-webkit-text-stroke:0.3px #111;">Run</div>

<div class="abs" style="left:201px;top:619px;width:527.5px;height:421px;background:#fff;"></div>
<svg class="abs" style="left:201px;top:619px" width="528" height="421" viewBox="201 619 528 421" font-family="Liberation Sans">
<rect x="271.2" y="669.9" width="437.1" height="323.8" fill="#fff" stroke="#7f7f7f" stroke-width="1.6"/>
<g fill="#1f77b4">
<path fill-rule="evenodd" d="M354.5,882.7 352.9,886.6 353.2,887.9 351.6,888.3 350.4,889.5 350.0,891.1 351.1,893.4 349.8,893.7 347.6,895.7 347.2,897.3 348.1,899.4 347.8,901.0 345.9,901.4 344.7,902.6 344.4,907.2 342.9,907.6 340.8,909.5 340.5,911.8 338.8,913.1 338.4,914.7 338.7,917.1 336.5,918.6 336.0,920.2 336.5,922.0 334.7,923.4 333.9,927.3 334.4,928.9 336.1,930.2 335.7,931.9 336.1,933.5 337.3,934.7 339.3,935.0 339.5,937.7 340.7,938.9 341.8,939.2 343.1,940.8 344.2,941.1 344.5,942.2 345.7,943.4 347.7,943.7 348.0,946.2 349.1,947.4 351.8,948.2 352.8,948.0 355.3,949.0 355.9,951.7 357.1,952.9 358.6,953.3 358.8,955.9 360.0,957.1 361.6,957.5 363.2,957.1 365.7,954.3 366.0,953.3 367.0,953.5 368.9,952.8 369.7,954.5 370.0,956.8 371.2,958.0 372.8,958.5 374.4,958.0 375.6,956.8 375.9,954.5 376.8,953.5 377.2,951.9 377.0,950.9 377.8,950.7 377.4,952.2 377.8,953.8 380.7,957.8 382.3,958.2 383.9,957.8 385.1,956.6 385.3,954.1 387.0,954.6 388.7,954.2 391.3,956.5 392.9,956.9 395.7,956.5 396.8,955.3 397.3,953.7 396.8,952.1 395.6,950.6 396.7,948.2 396.4,946.8 398.8,947.5 397.9,949.7 398.3,951.3 401.4,953.4 403.0,953.8 404.6,953.4 407.2,951.1 408.6,951.5 410.4,950.8 412.9,952.5 413.2,953.7 414.4,954.9 416.0,955.3 418.0,954.6 418.4,956.3 419.1,957.1 417.3,958.4 416.9,960.4 414.8,959.4 413.2,959.9 412.0,961.1 411.5,962.7 412.0,964.4 409.5,964.7 409.4,964.1 410.5,963.0 411.0,961.4 410.5,959.7 409.4,958.6 407.7,958.1 406.1,958.6 404.9,959.7 404.7,962.2 402.7,962.5 403.9,960.0 403.5,958.4 402.3,957.2 400.7,956.8 399.0,957.2 398.1,958.2 396.9,957.8 395.3,958.3 394.1,959.5 393.7,961.1 394.3,962.9 393.5,964.9 393.9,966.5 395.8,967.9 396.1,969.0 397.3,970.2 399.0,970.6 400.6,970.2 401.8,969.0 402.1,967.7 406.5,968.9 408.3,968.4 409.6,970.2 411.3,970.7 413.6,969.5 413.7,972.2 414.9,973.4 417.0,973.7 417.3,974.8 418.5,976.0 420.5,976.3 420.8,977.5 423.0,978.9 423.3,980.1 424.5,981.3 426.1,981.7 427.7,981.3 428.9,980.1 429.3,978.5 428.9,976.8 426.7,975.4 426.4,974.2 425.2,973.0 423.2,972.7 422.4,971.0 423.5,970.8 424.7,969.6 425.1,967.9 424.7,966.3 423.5,965.1 421.9,964.7 420.2,965.1 419.0,966.3 418.7,968.3 416.6,967.3 414.2,968.5 414.5,967.4 414.0,965.7 416.4,965.5 417.6,964.3 418.0,962.4 420.1,963.3 421.7,962.9 422.9,961.7 423.3,960.0 422.2,957.7 424.0,956.3 424.5,954.7 424.0,953.1 422.8,951.9 421.5,951.5 421.8,950.4 421.3,948.7 421.9,947.0 421.4,945.2 423.0,943.9 425.2,943.6 426.4,942.4 426.8,940.8 426.4,939.2 424.5,937.8 423.7,936.3 426.1,936.8 427.5,938.8 429.0,939.2 430.4,941.0 433.7,942.2 434.6,941.9 436.0,944.0 435.6,945.4 436.1,947.0 438.2,949.1 437.8,950.4 438.3,952.0 439.4,953.2 441.1,953.7 442.7,953.2 443.9,952.0 444.3,950.4 443.9,948.8 443.0,947.9 443.4,946.6 442.9,945.0 442.1,944.2 443.3,943.1 446.2,946.1 447.9,946.6 449.5,946.1 450.9,944.3 452.8,945.1 454.5,944.6 455.6,943.4 456.1,941.8 455.3,939.8 456.0,939.5 457.0,942.2 458.2,943.4 459.8,943.8 461.5,943.4 463.0,941.7 465.3,941.1 466.4,940.0 468.5,940.9 470.1,940.5 471.3,939.3 471.7,938.0 473.3,937.7 474.4,938.9 476.1,939.3 477.7,938.9 478.9,937.7 479.1,935.2 480.5,933.9 480.8,931.6 481.9,930.0 483.9,933.0 485.5,933.4 487.1,933.0 488.3,931.8 488.7,930.2 487.7,927.9 488.3,926.1 487.9,924.5 486.9,923.5 487.2,922.3 486.8,920.7 485.5,919.5 486.5,918.2 488.1,917.8 489.3,916.6 489.7,915.0 489.3,913.3 486.7,910.9 485.7,910.6 486.0,909.4 484.9,907.0 486.4,906.6 487.6,907.8 489.2,908.2 491.4,907.3 491.0,908.5 491.5,910.1 492.6,911.3 494.9,911.6 495.0,914.2 496.2,915.4 497.6,915.8 498.4,917.0 497.6,919.0 498.0,920.6 499.2,921.8 500.8,922.3 502.5,921.8 503.7,920.6 504.1,919.0 503.2,916.9 504.4,915.7 506.4,916.5 508.1,916.1 509.3,914.9 509.7,913.3 508.9,911.2 509.5,910.0 511.0,910.5 512.6,910.0 513.8,908.8 514.3,907.2 513.1,904.8 514.8,903.5 515.3,901.9 514.8,900.3 513.6,899.1 512.0,898.6 510.4,899.1 509.1,900.7 506.8,902.2 506.4,903.8 506.8,905.4 507.7,906.3 506.4,906.0 504.8,906.4 503.6,907.6 503.2,909.2 504.0,911.2 503.6,911.6 501.6,910.8 500.7,911.1 499.5,909.8 497.3,909.5 497.1,906.9 495.9,905.7 494.6,905.4 495.6,905.1 497.8,906.2 499.5,905.7 500.9,903.8 502.2,903.4 503.3,902.2 503.8,900.6 503.3,899.0 502.2,897.8 500.5,897.4 498.9,897.8 497.5,899.7 496.1,897.6 494.4,897.2 490.5,898.7 489.5,899.7 489.0,898.9 490.8,898.5 492.0,897.3 492.4,895.7 492.0,894.0 490.2,892.7 490.6,891.4 491.6,892.4 493.2,892.9 494.8,892.4 495.7,891.6 496.4,892.3 496.7,894.6 497.9,895.8 499.5,896.2 501.1,895.8 502.3,894.6 502.7,893.0 502.3,891.4 501.1,890.2 501.4,887.0 501.0,885.4 499.0,884.0 497.5,881.8 496.7,881.6 498.4,881.9 500.0,881.4 501.2,880.3 501.5,876.0 503.0,874.7 503.5,873.1 503.2,871.8 504.2,871.0 505.2,872.0 506.8,872.4 508.5,872.0 509.9,873.9 511.5,874.3 513.1,873.9 514.3,872.7 514.8,871.0 514.3,869.4 513.5,868.6 515.1,867.3 515.5,865.7 515.1,864.1 513.8,862.5 516.0,862.4 515.6,863.9 516.8,866.3 515.2,867.6 514.7,869.2 515.3,871.0 514.7,872.8 515.9,875.2 514.6,876.4 514.2,878.1 514.6,879.7 516.7,881.1 517.9,882.8 515.9,884.2 515.5,885.8 515.9,887.4 517.1,888.6 518.7,889.0 520.4,888.6 521.6,887.4 522.0,885.8 521.6,884.2 520.6,883.2 522.5,881.8 523.0,880.1 522.5,878.5 520.5,877.1 519.5,875.7 520.8,874.4 521.2,872.8 520.6,871.0 521.2,869.2 520.8,867.6 522.7,867.3 523.9,866.1 524.3,864.3 523.1,861.0 522.2,860.1 524.4,860.5 526.0,860.1 527.2,858.9 527.5,857.7 529.0,856.4 529.5,854.8 529.2,853.9 529.9,852.1 529.4,850.5 528.2,849.3 526.6,848.9 525.0,849.3 523.8,850.5 523.4,853.2 521.5,852.5 520.1,850.6 518.5,850.2 517.4,850.5 515.6,849.6 515.1,847.3 517.8,847.2 519.0,846.0 519.4,844.4 519.1,840.1 521.1,839.8 522.3,838.6 522.7,837.0 522.3,835.4 521.1,834.2 519.3,833.8 519.7,832.5 519.2,830.9 518.0,829.7 513.7,828.1 512.1,828.6 510.9,829.8 510.5,831.4 510.9,833.0 512.6,834.3 512.8,836.7 515.1,838.6 513.2,840.6 512.2,838.9 512.8,837.2 512.4,835.5 511.2,834.3 509.6,833.9 507.9,834.3 506.7,835.5 504.6,834.6 503.7,834.9 503.1,834.4 503.5,833.1 503.0,831.5 501.8,830.3 500.4,829.9 501.6,828.2 503.3,827.8 504.5,826.6 505.0,825.0 503.8,822.6 505.0,820.3 504.8,818.4 505.5,817.8 505.7,815.3 507.5,813.9 508.0,812.3 506.9,810.1 508.5,808.8 508.8,807.7 510.0,807.3 511.3,808.4 509.0,811.0 508.6,815.9 506.8,817.2 506.4,818.9 506.9,820.6 506.3,822.3 506.8,824.0 507.9,825.1 509.6,825.6 511.2,825.1 513.1,823.1 515.7,824.2 517.4,823.7 518.8,825.8 520.4,826.3 522.1,825.8 523.3,824.6 523.7,823.0 523.3,821.4 522.1,820.2 519.9,819.9 520.3,818.3 519.9,816.7 517.9,815.3 516.5,813.3 515.3,813.0 517.7,812.3 518.8,811.1 519.2,810.0 519.5,813.2 520.6,814.4 522.3,814.8 523.9,814.4 525.0,813.2 527.0,814.0 528.6,813.6 529.8,812.4 530.0,809.9 531.9,809.5 533.1,808.3 533.6,806.7 533.1,805.1 531.7,803.8 531.3,802.4 530.1,801.2 528.5,800.8 526.3,801.3 529.7,798.5 530.2,796.9 529.4,794.9 529.2,792.3 528.0,791.2 524.2,789.8 522.4,790.4 520.7,789.9 518.7,790.8 517.1,790.4 515.5,790.8 514.3,792.0 513.9,793.6 514.4,795.3 512.6,796.7 512.1,798.3 512.6,799.9 513.8,801.1 515.4,801.6 517.0,801.1 518.2,799.9 518.6,798.3 518.1,796.6 519.8,796.2 519.1,798.1 519.8,800.0 518.7,801.1 518.2,802.8 518.5,803.9 516.8,805.2 516.5,806.4 516.2,804.3 512.3,801.4 511.9,799.8 508.2,796.8 506.6,796.4 504.9,796.8 503.8,798.0 503.3,799.6 503.8,801.2 505.6,802.8 505.2,804.0 503.9,804.5 503.6,802.2 502.4,801.0 500.8,800.5 499.2,801.0 498.0,802.2 497.6,803.8 498.0,805.4 499.2,806.6 500.8,807.0 502.6,806.5 502.8,808.8 503.4,809.4 502.8,809.8 501.9,808.9 500.2,808.5 498.2,809.3 498.5,808.1 498.1,806.4 496.9,805.2 495.3,804.8 493.7,805.2 492.5,806.4 492.0,808.1 492.5,809.7 493.7,810.9 495.3,811.3 497.3,810.4 497.0,811.7 497.4,813.4 499.1,814.7 497.7,815.9 497.3,817.5 498.3,819.8 498.7,822.1 495.3,825.6 494.9,827.2 495.3,828.8 496.4,829.9 495.1,830.2 493.9,831.4 493.5,832.9 493.1,831.6 491.9,830.4 490.3,830.0 488.7,830.4 487.5,831.6 487.1,833.3 488.2,835.6 486.8,835.9 486.4,834.6 485.2,833.4 483.6,832.9 481.5,833.8 480.6,832.9 479.0,832.5 477.8,832.8 480.6,830.8 482.0,827.1 481.8,826.1 483.1,826.7 482.1,828.8 482.5,830.4 483.7,831.6 485.3,832.1 487.0,831.6 488.2,830.4 488.6,828.8 488.2,827.2 486.0,825.8 487.0,823.6 486.6,822.0 485.4,820.8 483.8,820.4 482.1,820.8 480.9,822.0 480.8,824.6 478.3,823.8 478.8,822.2 477.8,818.1 476.6,816.9 474.7,816.6 475.1,815.2 474.6,813.6 473.4,812.4 471.4,812.0 470.1,810.4 468.7,810.0 468.6,808.1 471.1,807.8 472.3,806.7 472.7,805.0 472.3,803.5 474.8,803.3 476.0,802.1 476.4,800.5 476.0,798.8 474.8,797.6 472.9,797.3 472.8,796.4 474.5,796.0 475.6,794.9 475.3,796.1 475.7,797.7 476.9,798.9 480.0,799.4 482.0,798.6 483.2,799.8 484.8,800.2 486.4,799.8 487.6,798.6 488.9,798.9 491.2,797.8 491.7,798.9 489.0,799.1 487.8,800.3 487.4,801.9 488.2,803.9 487.1,804.2 485.9,805.4 485.5,807.0 486.2,809.0 484.3,810.3 483.8,812.0 484.1,813.1 482.9,814.3 482.5,815.9 482.9,817.5 484.1,818.7 485.7,819.1 487.4,818.7 488.5,817.5 489.0,815.9 491.5,815.7 492.7,814.5 493.2,812.9 492.7,811.3 491.5,810.1 490.4,809.8 491.5,808.6 492.0,807.0 491.1,805.0 492.3,804.7 493.5,803.5 493.9,801.9 493.1,800.0 495.8,799.8 497.0,798.6 497.4,796.8 498.6,796.7 500.7,797.6 502.3,797.2 503.5,796.0 503.9,794.4 503.5,792.7 502.3,791.6 499.8,791.3 497.7,790.4 496.1,790.9 494.9,792.0 494.5,793.8 492.6,794.2 491.9,794.8 490.5,792.9 488.9,792.4 486.6,793.5 485.2,791.5 483.6,791.1 482.0,791.5 480.7,793.1 478.6,792.8 476.9,793.2 475.8,794.3 476.1,793.2 475.7,791.6 473.1,789.0 470.5,788.8 469.4,787.6 467.7,787.2 466.1,787.6 464.9,788.8 464.5,790.4 464.9,792.0 466.1,793.2 468.7,793.4 469.3,794.0 467.2,795.3 465.4,794.6 463.8,795.1 462.0,796.5 460.8,797.7 460.4,799.3 460.8,800.9 462.0,802.1 463.6,802.5 465.2,802.1 467.9,799.8 470.0,800.4 470.3,802.0 467.9,802.2 466.7,803.4 466.2,805.0 466.5,806.1 464.0,806.4 461.8,805.4 460.2,805.8 459.0,807.0 458.5,808.6 459.1,810.4 457.1,810.9 456.2,810.5 457.1,809.6 457.6,808.0 457.1,806.4 455.9,805.2 454.3,804.8 452.4,805.5 450.7,805.0 449.1,805.5 447.9,806.6 447.5,808.3 448.0,810.0 445.5,810.9 444.3,812.1 443.9,813.7 444.3,815.4 445.5,816.6 447.2,817.0 452.2,814.8 451.8,816.2 452.2,817.8 453.4,819.0 455.0,819.5 456.7,819.0 457.8,817.8 458.2,816.7 458.8,816.8 459.1,817.8 458.2,819.9 459.2,822.0 458.1,822.7 457.2,821.8 455.6,821.4 453.7,822.0 453.4,820.8 452.2,819.6 450.6,819.2 449.0,819.6 447.8,820.8 447.3,822.4 447.8,824.0 449.0,825.2 451.1,825.5 451.5,827.1 452.7,828.3 454.3,828.7 455.9,828.3 457.6,827.0 458.5,827.9 459.9,828.3 460.8,831.0 462.0,832.2 465.7,832.5 463.9,833.9 463.4,835.5 463.9,837.1 464.9,838.2 463.6,840.3 461.4,841.8 461.0,843.3 459.7,843.9 460.0,840.9 459.3,838.9 460.7,837.7 461.1,836.1 460.7,834.4 459.5,833.3 457.8,832.8 456.6,833.2 456.3,830.9 455.1,829.7 453.2,829.3 448.1,826.9 446.5,827.3 445.3,828.5 444.8,830.2 445.3,831.8 446.7,833.0 445.8,835.1 446.1,835.9 443.7,835.2 443.5,832.7 444.1,830.8 443.7,829.2 442.5,828.0 440.9,827.6 439.2,828.0 438.1,829.2 437.7,830.4 436.6,829.3 435.0,828.8 433.3,829.3 432.2,830.5 431.7,832.1 432.3,833.9 431.2,835.1 429.6,834.4 429.3,832.2 427.4,830.8 427.7,829.6 427.3,827.9 426.1,826.8 424.5,826.3 422.7,826.9 421.6,825.3 422.7,825.6 424.3,825.2 425.5,824.0 427.9,823.7 429.0,822.6 429.5,820.9 432.1,820.7 433.2,819.5 433.7,817.9 433.2,816.2 432.1,815.0 430.4,814.6 428.8,815.0 427.4,816.9 425.9,815.2 426.2,813.9 424.9,810.3 426.4,809.8 427.5,808.8 428.8,810.4 431.3,810.6 431.7,812.5 432.9,813.7 434.5,814.1 436.1,813.7 437.3,812.5 437.8,810.9 437.3,809.3 436.1,808.1 433.6,807.9 433.0,805.8 434.6,805.4 435.7,804.2 436.2,802.5 435.7,800.9 434.1,799.6 433.9,797.1 432.7,795.9 431.1,795.5 429.5,795.9 428.3,797.1 427.9,798.7 428.3,800.3 429.9,801.6 429.7,802.5 430.3,804.4 428.8,804.8 427.8,805.8 427.7,804.4 428.6,802.2 428.2,800.6 427.0,799.4 425.4,799.0 423.2,799.9 422.9,798.0 421.7,796.8 420.1,796.4 418.5,796.8 417.3,798.0 416.8,799.6 417.3,801.2 418.5,802.4 420.8,802.7 420.4,804.3 421.9,808.3 420.3,808.7 418.8,811.0 417.5,811.3 416.3,812.5 416.0,813.6 416.5,811.7 416.0,810.1 414.8,808.9 413.2,808.4 411.6,808.9 410.4,810.1 410.0,811.7 410.4,813.3 411.8,814.6 411.1,816.5 409.3,816.8 408.2,818.0 407.7,819.7 408.2,821.3 409.3,822.5 410.5,822.8 409.5,823.8 409.1,825.4 409.5,827.0 410.7,828.2 412.3,828.6 414.0,828.2 415.1,827.0 415.6,825.4 415.1,823.8 414.0,822.6 412.8,822.3 413.8,821.3 414.2,819.7 416.2,819.1 418.4,820.1 420.0,819.6 421.2,818.2 421.6,819.4 419.9,820.7 419.4,822.4 420.6,824.8 418.0,824.9 416.8,826.1 416.3,827.7 416.8,829.4 418.2,830.9 420.9,831.1 420.6,831.7 418.8,832.5 416.4,831.4 414.8,831.8 413.5,833.6 411.7,834.0 409.8,833.3 408.2,833.7 407.0,834.9 406.6,836.5 407.0,838.1 408.2,839.3 409.8,839.8 411.4,839.3 412.6,839.9 409.8,841.8 409.4,843.4 409.8,845.0 408.6,844.5 408.9,843.3 408.4,841.7 407.3,840.5 404.8,840.3 404.1,837.7 402.9,836.6 401.3,836.1 399.6,836.6 397.9,839.2 396.0,838.4 394.3,838.8 393.1,840.0 392.7,841.6 393.1,844.1 390.4,844.3 389.2,845.5 388.8,847.1 389.2,848.7 391.2,850.1 391.4,852.1 389.6,853.4 388.9,856.2 388.3,856.7 386.8,854.7 385.2,854.2 383.6,854.7 382.1,856.9 381.6,856.8 381.2,854.8 380.1,853.6 378.4,853.2 376.8,853.6 375.5,855.4 373.5,854.6 371.9,855.0 370.7,856.2 370.2,857.8 370.7,859.5 371.7,860.5 370.6,861.6 370.1,863.2 370.6,864.9 372.2,866.2 372.5,867.3 370.4,866.5 370.1,864.2 368.0,862.2 366.4,861.8 364.8,862.2 363.6,863.4 363.2,865.1 364.0,867.1 362.1,867.5 360.9,868.6 360.5,870.3 361.2,874.4 360.0,874.7 358.3,876.9 356.1,878.4 355.6,880.0 356.0,881.4ZM406.3,943.1 407.9,941.8 408.4,940.2 407.9,938.6 409.3,938.3 410.5,939.4 411.4,943.8 409.7,943.3 408.1,943.7 407.1,944.7ZM403.5,847.2 404.0,846.1 405.0,846.4 404.8,848.0ZM410.7,845.9 412.7,846.7 414.2,846.3 414.5,847.2 412.6,848.9ZM399.9,964.4 399.5,963.0 400.7,963.3 402.2,962.9 401.0,965.0ZM449.6,843.9 448.9,843.2 450.3,842.8 451.8,840.7 451.1,843.5 451.7,845.3 449.9,846.0ZM438.6,849.6 437.2,851.5 437.0,850.4 438.2,849.3 438.6,847.6 440.3,847.3 441.0,847.9 441.4,848.8 440.8,849.3ZM462.2,935.4 463.3,933.5 464.2,933.8 464.0,935.1ZM455.5,848.9 457.7,848.7 458.3,848.1 457.8,848.9 456.2,849.8 455.3,849.6ZM464.3,821.5 464.7,819.9 464.3,818.5 465.2,816.4 464.8,814.8 463.6,813.6 462.0,813.2 461.5,811.8 463.5,811.4 465.5,812.4 465.7,814.8 466.9,816.0 468.9,816.4 470.2,818.0 472.1,818.4 471.7,819.8 472.4,821.7 472.1,825.1 465.1,823.0ZM471.6,925.7 470.2,922.6 468.7,921.4 469.1,919.8 468.8,918.5 469.9,917.9 470.2,919.1 471.4,920.3 473.0,920.7 474.1,920.4 476.3,921.8 476.0,923.2 473.4,923.3ZM487.5,880.5 491.2,881.8 492.4,881.5 493.8,882.3 492.6,884.6 491.9,885.1 490.7,883.9 487.9,883.3 485.9,884.1 485.6,883.8 486.3,881.4ZM492.1,835.9 492.6,837.3 490.7,837.2 490.0,836.4ZM479.5,841.1 477.3,838.5 479.0,839.0 481.0,838.1 481.9,838.9 480.8,839.2ZM484.2,897.8 486.1,896.4 486.7,897.6 484.4,898.5ZM479.7,919.9 480.8,918.7 482.0,919.8 481.2,920.6ZM479.4,907.4 479.4,904.9 481.9,905.5 482.6,906.2 481.2,906.6 480.3,907.5ZM494.2,859.0 492.5,858.2 491.6,856.4 493.6,856.0 494.4,856.8ZM500.5,861.1 503.5,860.3 502.9,861.5 501.3,862.8 501.0,865.2 499.4,864.2 497.5,863.8 496.0,862.3 495.8,861.1 497.3,861.5 499.2,860.8ZM504.3,854.4 504.5,850.6 506.2,851.1 507.8,850.7 509.0,849.5 509.2,847.0 510.3,846.9 509.2,849.2 509.7,850.8 511.9,852.4 509.5,852.7 508.3,853.9 507.9,855.5 508.3,857.1 509.5,858.3 511.7,858.6 511.7,860.4 510.8,860.1 508.9,860.8 507.6,859.4 506.0,858.9 504.5,859.3 505.2,857.4ZM498.1,837.1 498.4,835.8 498.9,838.9 500.1,840.1 505.0,841.0 506.8,842.4 506.7,844.7 505.1,844.9 503.0,844.0 501.4,844.5 500.2,845.8 499.7,844.3 498.6,843.2 499.1,841.5 498.7,839.9 496.6,838.4ZM499.8,848.5 498.4,850.5 495.8,850.1 496.3,849.0 498.6,848.7 499.8,847.4ZM411.3,808.1 412.9,807.7 414.0,806.6 416.4,806.4 417.6,805.2 418.0,803.6 417.6,801.9 416.4,800.8 414.8,800.3 413.2,800.8 412.1,801.8 409.6,802.1 408.4,803.3 408.0,804.9 408.4,806.5 409.6,807.7ZM429.6,952.8 430.8,953.9 432.5,954.4 434.1,953.9 435.3,952.8 435.7,948.1 435.3,946.4 434.1,945.2 432.5,944.8 430.8,945.3 429.8,944.3 428.1,943.9 426.5,944.3 425.3,945.5 424.9,947.1 425.3,948.8 426.5,950.0 428.7,950.2ZM433.6,828.1 435.3,828.6 436.9,828.1 438.1,826.9 438.6,825.3 437.2,821.2 436.0,820.0 434.4,819.5 432.8,820.0 431.6,821.2 431.2,822.8 431.5,824.2 429.0,824.4 427.8,825.6 427.4,827.2 427.8,828.8 429.0,830.0 430.6,830.4 432.2,830.0ZM455.5,805.1 457.1,805.5 458.8,805.1 460.0,803.9 460.4,802.2 460.0,800.6 458.8,799.4 457.1,799.0 455.8,799.4 455.4,797.8 454.2,796.6 452.6,796.1 451.0,796.6 449.8,797.8 449.3,799.4 449.8,801.0 451.0,802.2 452.6,802.6 453.9,802.3 454.3,803.9ZM545.7,812.7 544.8,813.6 544.4,815.2 544.9,819.2 546.1,820.4 547.7,820.8 549.3,820.4 550.5,819.2 551.0,817.6 550.4,813.6 549.2,812.4 547.6,812.0 548.5,811.1 548.9,809.5 548.5,807.9 547.8,807.1 547.5,804.9 546.3,803.7 544.7,803.3 543.0,803.7 541.9,804.9 541.4,806.6 542.6,808.9 542.8,811.1 544.0,812.3ZM541.9,818.4 540.7,817.2 539.1,816.8 537.5,817.2 536.5,818.3 534.1,817.1 532.5,817.5 531.3,818.7 530.9,820.3 531.3,822.0 532.5,823.2 533.8,823.5 530.2,824.8 529.0,826.0 528.6,827.6 529.0,829.2 530.2,830.4 531.9,830.8 535.6,829.5 536.8,828.3 537.2,826.7 536.8,825.1 535.6,823.9 534.3,823.5 535.7,823.2 536.8,822.1 539.1,823.3 540.7,822.9 541.9,821.7 542.4,820.0ZM560.3,829.8 561.7,831.7 563.3,832.2 564.9,831.7 566.1,830.5 566.5,828.9 565.7,826.3 564.5,825.2 562.7,824.8 562.4,822.8 561.2,821.6 559.6,821.2 557.9,821.6 556.8,822.8 556.3,824.4 556.8,826.0 557.9,827.2 559.7,827.6ZM546.2,829.4 546.6,831.1 547.8,832.3 549.4,832.7 551.8,831.5 552.2,833.0 553.4,834.2 555.0,834.7 556.6,834.2 557.8,833.0 558.3,831.4 557.8,829.8 556.6,828.6 555.0,828.2 552.6,829.3 552.2,827.8 551.1,826.6 548.3,826.5 548.9,824.7 548.5,823.1 547.3,821.9 545.6,821.5 544.0,821.9 542.8,823.1 542.4,824.7 542.8,826.4 544.0,827.6 546.7,827.7ZM526.8,842.7 528.0,843.9 529.6,844.3 531.3,843.9 532.5,842.7 532.9,841.1 532.5,839.4 531.1,838.2 530.8,835.8 528.8,833.6 527.2,833.2 525.6,833.6 524.4,834.8 523.9,836.4 524.4,838.0 526.6,840.3ZM530.4,846.5 530.8,848.1 532.0,849.3 533.6,849.7 533.8,852.0 536.7,854.3 538.4,854.7 540.0,854.3 541.2,853.1 541.6,851.5 541.2,849.9 538.3,847.6 536.7,847.1 536.5,844.8 535.6,844.0 538.3,843.8 539.5,842.6 539.9,841.0 539.5,839.4 538.3,838.2 536.6,837.8 535.0,838.2 533.8,839.4 533.4,841.0 533.8,842.6 534.7,843.5 532.0,843.6 530.8,844.8ZM549.4,848.9 550.3,849.8 551.9,850.3 553.6,849.8 554.8,848.6 555.2,847.0 554.8,845.4 553.6,844.2 551.2,844.0 549.7,841.9 548.1,841.5 546.5,841.9 545.3,843.1 544.9,844.7 545.3,846.4 547.0,848.6ZM523.4,879.4 524.6,880.6 526.2,881.0 527.8,880.6 529.0,879.4 529.4,877.6 530.9,878.0 532.5,877.6 533.7,876.4 534.1,874.8 533.7,873.1 532.5,871.9 530.9,871.5 529.2,871.9 528.1,873.1 527.7,874.9 526.2,874.5 524.6,875.0 523.4,876.2 523.0,877.8ZM502.2,877.5 505.0,883.8 506.2,885.0 510.3,886.3 511.9,885.9 513.1,884.7 514.7,880.6 514.3,878.9 513.1,877.8 511.5,877.3 509.6,878.0 507.1,874.7 505.5,874.3 503.9,874.7 502.7,875.9Z"/>
<circle cx="405.8" cy="831.6" r="3.25"/>
<circle cx="421.9" cy="793.0" r="3.25"/>
<circle cx="428.9" cy="962.7" r="3.25"/>
<circle cx="435.8" cy="956.8" r="3.25"/>
<circle cx="444.8" cy="803.6" r="3.25"/>
<circle cx="536.7" cy="810.6" r="3.25"/>
<circle cx="554.1" cy="815.9" r="3.25"/>
<circle cx="491.7" cy="825.7" r="3.25"/>
<circle cx="540.3" cy="829.3" r="3.25"/>
<circle cx="551.8" cy="837.4" r="3.25"/>
<circle cx="528.5" cy="868.5" r="3.25"/>
<circle cx="520.6" cy="908.3" r="3.25"/>
<circle cx="642.8" cy="814.9" r="3.25"/>
<circle cx="642.1" cy="819.3" r="3.25"/>
<circle cx="665.8" cy="817.8" r="3.25"/>
<circle cx="677.4" cy="814.9" r="3.25"/>
<circle cx="665.4" cy="828.3" r="3.25"/>
<circle cx="687.0" cy="832.0" r="3.25"/>
<circle cx="685.2" cy="859.6" r="3.25"/>
<circle cx="683.8" cy="894.3" r="3.25"/>
<circle cx="662.9" cy="885.9" r="3.25"/>
<circle cx="675.0" cy="914.3" r="3.25"/>
<circle cx="636.1" cy="903.0" r="3.25"/>
<circle cx="643.9" cy="910.1" r="3.25"/>
<circle cx="629.1" cy="862.7" r="3.25"/>
<circle cx="608.6" cy="863.0" r="3.25"/>
<circle cx="599.1" cy="866.9" r="3.25"/>
<circle cx="590.6" cy="880.1" r="3.25"/>
<circle cx="601.9" cy="889.8" r="3.25"/>
<circle cx="605.4" cy="825.4" r="3.25"/>
<circle cx="594.8" cy="817.8" r="3.25"/>
<circle cx="591.3" cy="829.9" r="3.25"/>
<circle cx="601.9" cy="833.8" r="3.25"/>
<circle cx="581.8" cy="817.8" r="3.25"/>
<circle cx="581.8" cy="828.5" r="3.25"/>
<circle cx="571.9" cy="841.7" r="3.25"/>
<circle cx="577.2" cy="840.4" r="3.25"/>
<circle cx="566.6" cy="857.5" r="3.25"/>
<circle cx="550.0" cy="872.2" r="3.25"/>
<circle cx="546.5" cy="893.5" r="3.25"/>
<circle cx="539.4" cy="903.0" r="3.25"/>
<circle cx="541.9" cy="916.7" r="3.25"/>
<circle cx="547.2" cy="921.1" r="3.25"/>
<circle cx="571.9" cy="917.4" r="3.25"/>
<circle cx="574.3" cy="920.6" r="3.25"/>
<circle cx="580.7" cy="910.6" r="3.25"/>
<circle cx="511.9" cy="923.2" r="3.25"/>
<circle cx="515.4" cy="933.2" r="3.25"/>
<circle cx="519.3" cy="931.6" r="3.25"/>
<circle cx="527.8" cy="931.9" r="3.25"/>
<circle cx="534.1" cy="931.9" r="3.25"/>
<circle cx="505.2" cy="902.2" r="3.25"/>
<circle cx="516.1" cy="890.4" r="3.25"/>
<circle cx="522.8" cy="887.7" r="3.25"/>
</g>
<line x1="291.2" y1="978.5" x2="686.6" y2="683.9" stroke="#f22" stroke-width="1.6"/>
<line x1="333.6" y1="994" x2="333.6" y2="999.5" stroke="#555" stroke-width="1.2"/>
<text x="333.6" y="1011.2" font-size="12.2" fill="#333" text-anchor="middle">0</text>
<line x1="265.5" y1="946.9" x2="271" y2="946.9" stroke="#555" stroke-width="1.2"/>
<text x="262.5" y="951.2" font-size="12.2" fill="#333" text-anchor="end">0</text>
<line x1="404.2" y1="994" x2="404.2" y2="999.5" stroke="#555" stroke-width="1.2"/>
<text x="404.2" y="1011.2" font-size="12.2" fill="#333" text-anchor="middle">2</text>
<line x1="265.5" y1="894.3" x2="271" y2="894.3" stroke="#555" stroke-width="1.2"/>
<text x="262.5" y="898.6" font-size="12.2" fill="#333" text-anchor="end">2</text>
<line x1="474.8" y1="994" x2="474.8" y2="999.5" stroke="#555" stroke-width="1.2"/>
<text x="474.8" y="1011.2" font-size="12.2" fill="#333" text-anchor="middle">4</text>
<line x1="265.5" y1="841.7" x2="271" y2="841.7" stroke="#555" stroke-width="1.2"/>
<text x="262.5" y="846.0" font-size="12.2" fill="#333" text-anchor="end">4</text>
<line x1="545.4" y1="994" x2="545.4" y2="999.5" stroke="#555" stroke-width="1.2"/>
<text x="545.4" y="1011.2" font-size="12.2" fill="#333" text-anchor="middle">6</text>
<line x1="265.5" y1="789.1" x2="271" y2="789.1" stroke="#555" stroke-width="1.2"/>
<text x="262.5" y="793.4" font-size="12.2" fill="#333" text-anchor="end">6</text>
<line x1="616.0" y1="994" x2="616.0" y2="999.5" stroke="#555" stroke-width="1.2"/>
<text x="616.0" y="1011.2" font-size="12.2" fill="#333" text-anchor="middle">8</text>
<line x1="265.5" y1="736.5" x2="271" y2="736.5" stroke="#555" stroke-width="1.2"/>
<text x="262.5" y="740.8" font-size="12.2" fill="#333" text-anchor="end">8</text>
<line x1="686.6" y1="994" x2="686.6" y2="999.5" stroke="#555" stroke-width="1.2"/>
<text x="686.6" y="1011.2" font-size="12.2" fill="#333" text-anchor="middle">10</text>
<line x1="265.5" y1="683.9" x2="271" y2="683.9" stroke="#555" stroke-width="1.2"/>
<text x="262.5" y="688.2" font-size="12.2" fill="#333" text-anchor="end">10</text>
<text x="488.6" y="661.5" font-size="22.5" fill="#1a1a1a" text-anchor="middle" letter-spacing="1.05">MSE = 0.5370</text>
<text x="488.6" y="1032.5" font-size="19" fill="#1a1a1a" text-anchor="middle" letter-spacing="1.2">Known Scalar</text>
<text transform="translate(238.2,831.6) rotate(-90)" font-size="19" fill="#1a1a1a" text-anchor="middle" letter-spacing="1.35">Predicted Scalar</text>
</svg>
<!-- viewer toolbar buttons -->
<div class="tb2" style="left:798.3px;width:34.2px;"></div>
<div class="tb2" style="left:842.2px;width:34.2px;"></div>
<div class="tb2" style="left:886px;width:34.2px;"></div>
<div class="tb2" style="left:929.8px;width:64.3px;"><div class="tbdiv" style="left:35.6px"></div></div>
<div class="tb2" style="left:1003.6px;width:64.4px;"><div class="tbdiv" style="left:36px"></div></div>
<svg class="abs" style="left:792px;top:1008px" width="288" height="56" viewBox="792 1008 288 56">
  <!-- compress arrows -->
  <g stroke="#000" stroke-width="3" fill="#000" stroke-linecap="butt">
    <path d="M804.4,1025 L810.6,1031.2" /><path d="M804.6,1033.3 L812.8,1033.3 L812.8,1025.1Z" stroke="none"/>
    <path d="M826,1025 L819.8,1031.2" /><path d="M825.8,1033.3 L817.6,1033.3 L817.6,1025.1Z" stroke="none"/>
    <path d="M804.4,1046 L810.6,1039.8" /><path d="M804.6,1037.7 L812.8,1037.7 L812.8,1045.9Z" stroke="none"/>
    <path d="M826,1046 L819.8,1039.8" /><path d="M825.8,1037.7 L817.6,1037.7 L817.6,1045.9Z" stroke="none"/>
  </g>
  <!-- icon 2 -->
  <rect x="846.6" y="1023" width="23.8" height="24.1" rx="5.5" fill="#d9553b"/>
  <path d="M853.5,1028 h11.2 v3.2 M864.7,1036 v6.4 h-11.2 v-3.6" fill="none" stroke="#fff" stroke-width="2"/>
  <path d="M853.5,1028 v7.4" stroke="#fff" stroke-width="2"/>
  <path d="M848,1037.2 l5,-4.3 v3.2 h12.5 v2.2 h-12.5 v3.2z" fill="#fff"/>
  <path d="M869.4,1033.2 l-4.2,-3.4 v6.8z" fill="#fff"/>
  <rect x="855" y="1036.6" width="8.6" height="3.6" fill="#fff"/>
  <!-- icon 3 flag -->
  <rect x="890.4" y="1023" width="23.8" height="24.1" rx="5.5" fill="#d9553b"/>
  <path d="M893.6,1026 v19" stroke="#fff" stroke-width="1.7" stroke-linecap="round"/>
  <path d="M895.2,1027.6 c4,-2.4 7,1.6 11,0.6 c2,-0.5 4,-1.2 5.6,-1.6 v11.4 c-2,0.6 -4,1.4 -6,1.4 c-4,0 -7,-3 -10.6,-0.2z" fill="#fff"/>
  <!-- icon 4 eye -->
  <rect x="934" y="1023" width="23.8" height="24.1" rx="5.5" fill="#d9553b"/>
  <path d="M936.2,1035.5 c5.5,-6.6 14,-6.6 19.4,0" fill="none" stroke="#fff" stroke-width="1.8" stroke-linecap="round"/>
  <path d="M936.2,1040.2 c5.5,4.6 14,4.6 19.4,0" fill="none" stroke="#fff" stroke-width="1.8" stroke-linecap="round"/>
  <circle cx="945.9" cy="1037" r="3.3" fill="#fff"/>
  <path d="M939.2,1027.6 l1.2,1.8 M945.9,1025.6 v2.2 M952.6,1027.6 l-1.2,1.8" stroke="#fff" stroke-width="1.7" stroke-linecap="round"/>
  <path d="M972.6,1030.2 L981,1038.4 L989.4,1030.2" fill="none" stroke="#1a1a1a" stroke-width="2.3" stroke-linecap="round" stroke-linejoin="round"/>
  <!-- icon 5 ISO -->
  <rect x="1007.9" y="1023" width="23.8" height="24.1" rx="5.5" fill="#d9553b"/>
  <text x="1019.4" y="1039.8" font-family="Liberation Sans" font-size="14" font-weight="bold" fill="#fff" text-anchor="middle" letter-spacing="-1.1">ISO</text>
  <path d="M1046.5,1030.2 L1054.9,1038.4 L1063.3,1030.2" fill="none" stroke="#1a1a1a" stroke-width="2.3" stroke-linecap="round" stroke-linejoin="round"/>
</svg>
<!-- Reconstructed combo -->
<div class="combo" style="left:1082.7px;top:1021px;width:193.4px;height:30.2px;line-height:31.6px;"><div class="ct" style="left:12.3px;letter-spacing:0.39px">Reconstructed</div><div class="cbtn" style="left:167px;top:2.5px;width:24.6px;height:24.4px;"><svg width="24.6" height="24.4" viewBox="0 0 24 24"><path d="M7.6,9.6 L12,5.4 L16.4,9.6 M7.6,14.4 L12,18.6 L16.4,14.4" fill="none" stroke="#fff" stroke-width="2.2" stroke-linecap="round" stroke-linejoin="round"/></svg></div></div>
<!-- Compare combo -->
<div class="abs" style="left:1292.7px;top:1017.6px;width:115.2px;height:37.5px;border:2.4px solid #8b8b8b;border-radius:5px;box-sizing:border-box;background:#ececec;"><div class="abs" style="left:84.5px;top:0;width:1.6px;height:32.8px;background:#8b8b8b;"></div><div class="abs" style="left:8.4px;top:5.2px;font-size:15.8px;line-height:24px;color:#b4b4b4;">Compare</div></div>
<svg class="abs" style="left:1384px;top:1026px" width="22" height="20" viewBox="1384 1026 22 20"><path d="M1386.4,1030.8 L1394.4,1039.4 L1402.4,1030.8" fill="none" stroke="#1a1a1a" stroke-width="2.3" stroke-linecap="round" stroke-linejoin="round"/></svg>
<div class="abs" style="left:1416px;top:1017.6px;width:1px;height:37.4px;background:#d3d3d3;border-right:1px solid #f6f6f6;"></div>
<div class="abs" style="left:1511.4px;top:1017.6px;width:1px;height:37.4px;background:#d3d3d3;border-right:1px solid #f6f6f6;"></div>
<div class="chk" style="left:1428.3px;top:1026.4px;width:20.8px;height:20.6px;"><svg width="20.8" height="20.6" viewBox="0 0 21 21"><path d="M5,10.9 L9,15.4 L16,5.4" fill="none" stroke="#fff" stroke-width="2.8" stroke-linecap="round" stroke-linejoin="round"/></svg></div>
<div class="lbl" style="left:1456.8px;top:1025.6px;letter-spacing:0.1px">Align</div>
<div class="lbl" style="left:1689px;top:1025.6px;letter-spacing:0.03px">Viewers</div>
<!-- slider -->
<div class="abs" style="left:1790px;top:1030.6px;width:124.6px;height:8px;background:linear-gradient(180deg,#b9b9b9,#c9c9c9);border:1.2px solid #3c3c3c;box-sizing:border-box;border-radius:1px;"></div>
<div class="abs" style="left:1772px;top:1021px;width:20.5px;height:27.4px;background:linear-gradient(135deg,#b9b9b9,#8d8d8d);border:1.3px solid #777;border-radius:5px;box-sizing:border-box;"></div>
<svg class="abs" style="left:1776px;top:1043px" width="140" height="9" viewBox="1776 1043 140 9"><g stroke="#b3ab95" stroke-width="1.3"><path d="M1797.5,1044 v6.6 M1814.2,1044 v6.6 M1828.9,1044 v6.6 M1845.9,1044 v6.6 M1862.6,1044 v6.6 M1879,1044 v6.6 M1893.6,1044 v6.6 M1910.3,1044 v6.6"/></g><path d="M1780.5,1048.6 v2.2" stroke="#b3ab95" stroke-width="1.3"/></svg>
<!-- Feature map row -->
<div class="abs" style="left:798.2px;top:1065.8px;width:1123.8px;height:49px;border:1.6px solid #868686;border-radius:5px;box-sizing:border-box;"></div>
<div class="lbl" style="left:807px;top:1078.8px;letter-spacing:0.06px">Feature Map</div>
<div class="combo" style="left:939.1px;top:1074.7px;width:197px;height:29.2px;line-height:30.4px;"><div class="ct" style="left:12.3px;letter-spacing:0.18px">ShellThickness</div><div class="cbtn" style="left:170px;top:2.1px;width:24.6px;height:24.3px;"><svg width="24.6" height="24.3" viewBox="0 0 24 24"><path d="M7.6,9.6 L12,5.4 L16.4,9.6 M7.6,14.4 L12,18.6 L16.4,14.4" fill="none" stroke="#fff" stroke-width="2.2" stroke-linecap="round" stroke-linejoin="round"/></svg></div></div>
<div class="chk" style="left:1160.9px;top:1079.7px;width:20.6px;height:20.6px;"><svg width="20.6" height="20.6" viewBox="0 0 21 21"><path d="M5,10.9 L9,15.4 L16,5.4" fill="none" stroke="#fff" stroke-width="2.8" stroke-linecap="round" stroke-linejoin="round"/></svg></div>
<div class="lbl" style="left:1189.3px;top:1078.8px;letter-spacing:0.18px">Uniform Scale</div>
<div class="lbl" style="left:1349.3px;top:1078.8px;letter-spacing:-0.08px">Min</div>
<div class="spin" style="left:1396.1px;width:134.8px;"><span style="letter-spacing:0.9px">0.00</span></div>
<div class="stp" style="left:1535.3px;"><svg width="19.8" height="29.4" viewBox="0 0 20 30"><path d="M5.4,11 L10,6.4 L14.6,11 M5.4,19 L10,23.6 L14.6,19" fill="none" stroke="#222" stroke-width="1.9" stroke-linecap="round" stroke-linejoin="round"/></svg></div>
<div class="lbl" style="left:1571px;top:1078.8px;letter-spacing:0.07px">Max</div>
<div class="spin" style="left:1624.7px;width:134.8px;"><span style="letter-spacing:1.05px">4.00</span></div>
<div class="stp" style="left:1763.8px;"><svg width="19.8" height="29.4" viewBox="0 0 20 30"><path d="M5.4,11 L10,6.4 L14.6,11 M5.4,19 L10,23.6 L14.6,19" fill="none" stroke="#222" stroke-width="1.9" stroke-linecap="round" stroke-linejoin="round"/></svg></div>
<div class="abs" style="left:1802px;top:1079.7px;width:20.5px;height:20.5px;border-radius:5px;background:#f4f4f4;box-shadow:0 0 0 0.8px rgba(0,0,0,0.12),0 0.5px 1.5px rgba(0,0,0,0.18);"></div>
<div class="lbl" style="left:1830.3px;top:1078.8px;letter-spacing:0.21px">Auto</div>
<!-- status bar content -->
<svg class="abs" style="left:92px;top:1130px" width="22" height="26" viewBox="0 0 22 26"><path d="M3.4,3.6 H13.8 L18,7.8 V22.4 H3.4Z" fill="none" stroke="#111" stroke-width="2.3" stroke-linejoin="miter"/><path d="M6.8,10.6 h7.8 M6.8,14.4 h7.8 M6.8,18.2 h7.8" stroke="#111" stroke-width="1.8"/></svg>
<div class="lbl" style="left:139px;top:1132.6px;letter-spacing:0.11px">Project Saved</div>

</body>
</html>
